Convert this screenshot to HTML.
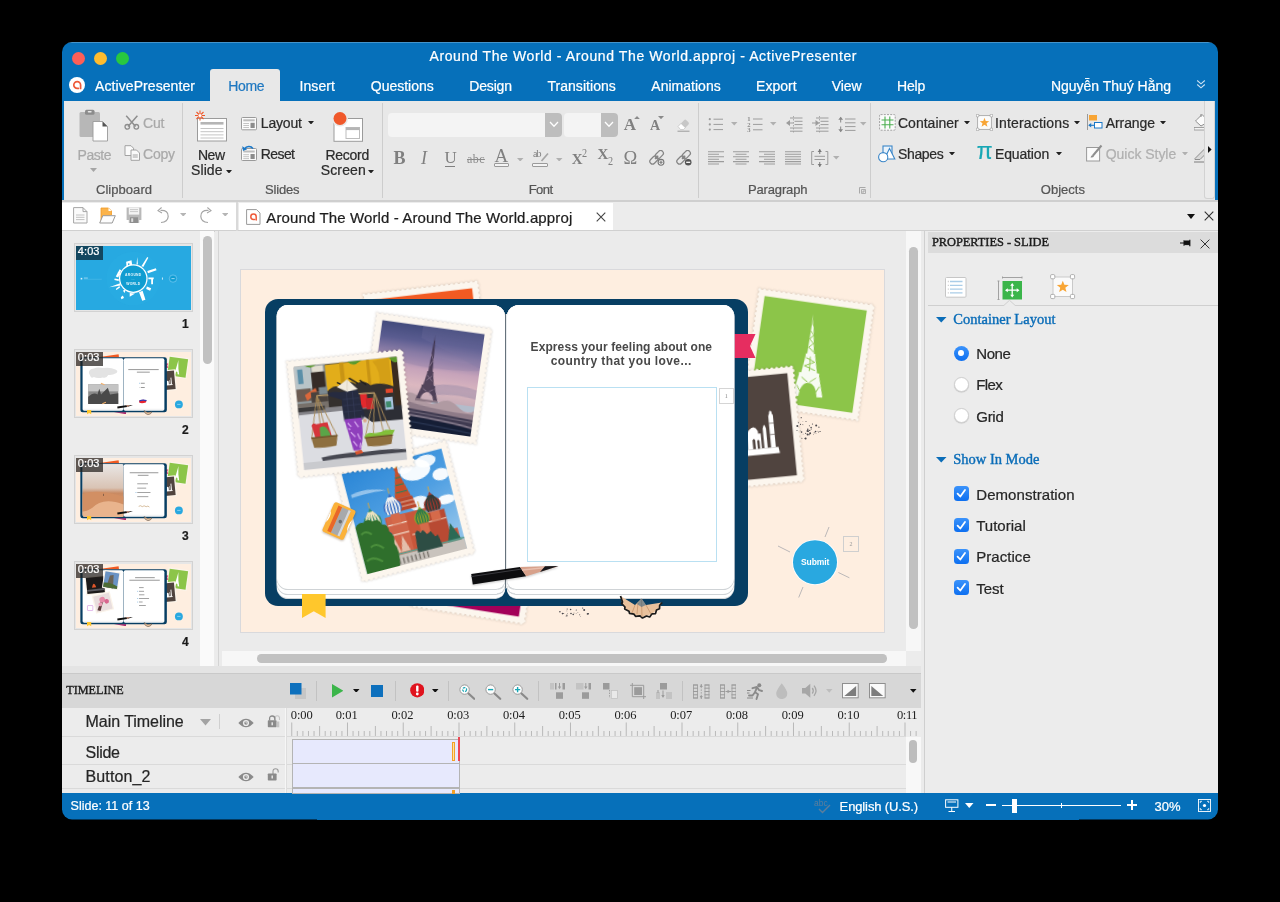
<!DOCTYPE html>
<html><head><meta charset="utf-8"><title>ActivePresenter</title>
<style>
html,body{margin:0;padding:0}
body{width:1280px;height:902px;background:#000;overflow:hidden;position:relative;font-family:"Liberation Sans",sans-serif}
#win{position:absolute;left:0;top:0;width:1280px;height:902px;clip-path:inset(42px 62px 82.5px 62px round 10px);background:#ececec;will-change:transform}
#win div,#win svg,#win span.t{position:absolute}
#win div{box-sizing:border-box}
.t{white-space:pre;line-height:1}
.f{font-family:"Liberation Sans",sans-serif;-webkit-text-stroke:.22px currentColor}
.fs{font-family:"Liberation Serif",serif}

</style></head><body>
<div id="win">
<div style="left:62px;top:42px;width:1156px;height:59px;background:#0670ba;"></div>
<div style="left:62px;top:42px;width:1156px;height:1px;background:rgba(255,255,255,0.25);"></div>
<div style="left:71.5px;top:51.5px;width:13px;height:13px;background:#fd5f57;border-radius:50%;"></div>
<div style="left:93.9px;top:51.5px;width:13px;height:13px;background:#febc2e;border-radius:50%;"></div>
<div style="left:116.2px;top:51.5px;width:13px;height:13px;background:#28c840;border-radius:50%;"></div>
<span class="t f" style="left:429.50px;top:48.75px;font-size:14px;color:#fff;letter-spacing:0.607px;">Around The World - Around The World.approj - ActivePresenter</span>
<div style="left:69px;top:77px;width:16px;height:16px;background:#fff;border-radius:50%;"></div>
<svg style="left:69px;top:77px;" width="16" height="16" viewBox="0 0 16 16"><path d="M11.6 11.4V8a3.4 3.4 0 1 0-3.4 3.4h1.2" fill="none" stroke="#ee5a3a" stroke-width="1.7" stroke-linecap="round"/></svg>
<span class="t f" style="left:95.00px;top:78.65px;font-size:14px;color:#fff;letter-spacing:0.084px;">ActivePresenter</span>
<div style="left:210px;top:69px;width:70px;height:32px;background:#e8e8e8;border-radius:3px 3px 0 0;"></div>
<span class="t f" style="left:228.25px;top:78.65px;font-size:14px;color:#1f78c1;letter-spacing:-0.370px;">Home</span>
<span class="t f" style="left:299.50px;top:78.65px;font-size:14px;color:#fff;letter-spacing:0.097px;">Insert</span>
<span class="t f" style="left:370.75px;top:78.65px;font-size:14px;color:#fff;letter-spacing:-0.006px;">Questions</span>
<span class="t f" style="left:469.25px;top:78.65px;font-size:14px;color:#fff;letter-spacing:-0.169px;">Design</span>
<span class="t f" style="left:547.40px;top:78.65px;font-size:14px;color:#fff;letter-spacing:0.045px;">Transitions</span>
<span class="t f" style="left:651.30px;top:78.65px;font-size:14px;color:#fff;letter-spacing:0.015px;">Animations</span>
<span class="t f" style="left:756.00px;top:78.65px;font-size:14px;color:#fff;letter-spacing:0.046px;">Export</span>
<span class="t f" style="left:831.70px;top:78.65px;font-size:14px;color:#fff;letter-spacing:-0.065px;">View</span>
<span class="t f" style="left:897.00px;top:78.65px;font-size:14px;color:#fff;letter-spacing:-0.199px;">Help</span>
<span class="t f" style="left:1051.00px;top:78.65px;font-size:14px;color:#fff;letter-spacing:-0.025px;">Nguyễn Thuý Hằng</span>
<svg style="left:1196px;top:79px;" width="10" height="11" viewBox="0 0 10 11"><path d="M1.2 1.5 L5 4.8 L8.8 1.5 M1.2 5.5 L5 8.8 L8.8 5.5" fill="none" stroke="#cfe3f3" stroke-width="1.1"/></svg>
<div style="left:62px;top:100.5px;width:1156px;height:100px;background:#e8e8e8;"></div>
<div style="left:62px;top:100.5px;width:2px;height:100px;background:#0670ba;"></div>
<div style="left:1215px;top:100.5px;width:3px;height:100px;background:#0670ba;"></div>
<div style="left:62px;top:200px;width:1156px;height:1.5px;background:#cfcfcf;"></div>
<div style="left:62px;top:202px;width:1156px;height:29px;background:#ececec;"></div>
<div style="left:62px;top:202.5px;width:174.5px;height:27.5px;background:#fff;"></div>
<div style="left:238.5px;top:202.5px;width:374px;height:27.5px;background:#fff;"></div>
<div style="left:62px;top:230.4px;width:1156px;height:1.2px;background:#d0d0d0;"></div>
<div style="left:236.3px;top:202px;width:2.2px;height:29px;background:#d9d9d9;"></div>
<div style="left:62px;top:793px;width:1156px;height:27.5px;background:#0670ba;"></div>
<span class="t f" style="left:70.60px;top:799.92px;font-size:12.5px;color:#fff;">Slide: 11 of 13</span>
<span class="t f" style="left:839.60px;top:799.50px;font-size:13px;color:#fff;letter-spacing:-0.123px;">English (U.S.)</span>
<span class="t f" style="left:1154.40px;top:800.00px;font-size:13px;color:#fff;letter-spacing:0.084px;">30%</span>
<div style="left:181.5px;top:103px;width:1px;height:95px;background:#cdcdcd;"></div>
<div style="left:381.5px;top:103px;width:1px;height:95px;background:#cdcdcd;"></div>
<div style="left:698.25px;top:103px;width:1px;height:95px;background:#cdcdcd;"></div>
<div style="left:870.0px;top:103px;width:1px;height:95px;background:#cdcdcd;"></div>
<svg style="left:79px;top:109px;" width="30" height="33" viewBox="0 0 30 33"><rect x="0.5" y="3" width="20.5" height="25" rx="1.5" fill="#b7b7b7"/>
<rect x="6" y="0.8" width="9.5" height="5" rx="1.5" fill="#8c8c8c"/><rect x="8.7" y="2" width="4" height="1.6" rx=".8" fill="#e8e8e8"/>
<path d="M14 12.5H23.5L28.5 17.5V32H14Z" fill="#fff" stroke="#9a9a9a" stroke-width=".9"/><path d="M23.5 12.5V17.5H28.5Z" fill="#555"/></svg>
<span class="t f" style="left:77.50px;top:147.95px;font-size:14px;color:#a9a9a9;letter-spacing:-0.453px;">Paste</span>
<svg style="left:90px;top:167.5px;" width="7" height="4" viewBox="0 0 7 4"><path d="M0 0H7L3.5 4Z" fill="#a5a5a5"/></svg>
<svg style="left:123.5px;top:114.5px;" width="16" height="15" viewBox="0 0 16 15"><path d="M2.2 0.8L11.6 11.4M13.4 0.8L4 11.4" stroke="#8e8e8e" stroke-width="1.5" fill="none"/>
<circle cx="3.3" cy="11.8" r="2.3" fill="none" stroke="#8e8e8e" stroke-width="1.3"/><circle cx="12.3" cy="11.8" r="2.3" fill="none" stroke="#8e8e8e" stroke-width="1.3"/></svg>
<span class="t f" style="left:143.00px;top:115.65px;font-size:14px;color:#a9a9a9;letter-spacing:-0.148px;">Cut</span>
<svg style="left:123.5px;top:145px;" width="17" height="16" viewBox="0 0 17 16"><path d="M1 .7H7L9.5 3.2V10.5H1Z" fill="#fafafa" stroke="#9a9a9a" stroke-width=".9"/>
<path d="M7 5H12.5L15.5 8V15.3H7Z" fill="#fafafa" stroke="#9a9a9a" stroke-width=".9"/><path d="M8.7 10H13.8M8.7 12H13.8" stroke="#9a9a9a" stroke-width=".9"/></svg>
<span class="t f" style="left:143.00px;top:146.90px;font-size:14px;color:#a9a9a9;letter-spacing:-0.229px;">Copy</span>
<span class="t f" style="left:96.00px;top:183.00px;font-size:13px;color:#555;letter-spacing:0.043px;">Clipboard</span>
<svg style="left:194px;top:108px;" width="34" height="34" viewBox="0 0 34 34"><rect x="3.5" y="10.5" width="29" height="22.5" fill="#fff" stroke="#9b9b9b" stroke-width="1"/>
<rect x="6.5" y="14" width="23" height="2.6" fill="#b5b5b5"/><path d="M6.5 20.5H29.5M6.5 23.7H29.5M6.5 26.9H29.5M6.5 30H29.5" stroke="#c4c4c4" stroke-width="1"/>
<g stroke="#f0582a" stroke-width="1.1"><path d="M6 2.5V12.5M1 7.5H11M2.5 4L9.5 11M9.5 4L2.5 11"/></g><circle cx="6" cy="7.5" r="1.6" fill="#fff"/></svg>
<span class="t f" style="left:198.00px;top:147.75px;font-size:14px;color:#2b2b2b;letter-spacing:-0.508px;">New</span>
<span class="t f" style="left:191.00px;top:163.15px;font-size:14px;color:#2b2b2b;letter-spacing:0.090px;">Slide</span>
<svg style="left:226px;top:169.5px;" width="6" height="3.5" viewBox="0 0 6 3.5"><path d="M0 0H6L3.0 3.5Z" fill="#222"/></svg>
<svg style="left:241px;top:117px;" width="16" height="13.5" viewBox="0 0 16 13.5"><rect x=".5" y=".5" width="15" height="12.3" rx="1" fill="#fbfbfb" stroke="#9a9a9a"/><rect x="2.3" y="2.3" width="11.4" height="2" fill="#bdbdbd"/>
<rect x="9.5" y="5.8" width="4.2" height="5.2" fill="#8c8c8c"/><path d="M2.3 6.5H8M2.3 8.5H8M2.3 10.5H8" stroke="#bdbdbd" stroke-width=".9"/></svg>
<span class="t f" style="left:260.75px;top:115.65px;font-size:14px;color:#2b2b2b;letter-spacing:-0.159px;">Layout</span>
<svg style="left:307.5px;top:120.5px;" width="6" height="3.5" viewBox="0 0 6 3.5"><path d="M0 0H6L3.0 3.5Z" fill="#222"/></svg>
<svg style="left:241px;top:145px;" width="16" height="16" viewBox="0 0 16 16"><rect x=".5" y="3.5" width="15" height="12" rx="1" fill="#fbfbfb" stroke="#9a9a9a"/><rect x="2.3" y="5.5" width="11.4" height="2" fill="#bdbdbd"/>
<rect x="9.5" y="9" width="4.2" height="5" fill="#8c8c8c"/><path d="M2.3 9.7H8M2.3 11.7H8M2.3 13.6H8" stroke="#bdbdbd" stroke-width=".9"/>
<path d="M3.5 4.2C5.5 .8 10 .8 12 3.6" fill="none" stroke="#1b78c8" stroke-width="1.6"/><path d="M1.2 1.2L2 6L6.2 4.2Z" fill="#1b78c8"/></svg>
<span class="t f" style="left:260.75px;top:146.90px;font-size:14px;color:#2b2b2b;letter-spacing:-0.582px;">Reset</span>
<svg style="left:331px;top:109px;" width="33" height="34" viewBox="0 0 33 34"><rect x="3" y="9.5" width="28.5" height="22.8" fill="#fff" stroke="#9b9b9b"/>
<rect x="15" y="18.5" width="13.5" height="11" fill="#fff" stroke="#bdbdbd"/><rect x="15" y="18.5" width="13.5" height="2.6" fill="#b5b5b5"/>
<circle cx="9" cy="9.5" r="8" fill="#e8e8e8"/><circle cx="9" cy="9.5" r="6.5" fill="#f0582a"/></svg>
<span class="t f" style="left:325.50px;top:147.75px;font-size:14px;color:#2b2b2b;letter-spacing:-0.278px;">Record</span>
<span class="t f" style="left:320.75px;top:163.15px;font-size:14px;color:#2b2b2b;letter-spacing:0.128px;">Screen</span>
<svg style="left:367.5px;top:169.5px;" width="6" height="3.5" viewBox="0 0 6 3.5"><path d="M0 0H6L3.0 3.5Z" fill="#222"/></svg>
<span class="t f" style="left:265.00px;top:183.00px;font-size:13px;color:#555;letter-spacing:-0.184px;">Slides</span>
<div style="left:387.5px;top:112.5px;width:174.5px;height:24px;background:#f4f4f4;border-radius:4px;"></div>
<div style="left:545px;top:112.5px;width:17px;height:24px;background:#bdbdbd;border-radius:0 4px 4px 0;"></div>
<svg style="left:548.5px;top:120.5px;" width="10" height="7" viewBox="0 0 10 7"><path d="M1 1L5 5.2L9 1" fill="none" stroke="#fff" stroke-width="1.3"/></svg>
<div style="left:563.75px;top:112.5px;width:54.25px;height:24px;background:#f4f4f4;border-radius:4px;"></div>
<div style="left:600.75px;top:112.5px;width:17.25px;height:24px;background:#bdbdbd;border-radius:0 4px 4px 0;"></div>
<svg style="left:604.3px;top:120.5px;" width="10" height="7" viewBox="0 0 10 7"><path d="M1 1L5 5.2L9 1" fill="none" stroke="#fff" stroke-width="1.3"/></svg>
<span class="t fs" style="left:623.75px;top:116.26px;font-size:17px;color:#808080;font-weight:700;">A</span>
<svg style="left:633.5px;top:116px;" width="6" height="3.2" viewBox="0 0 6 3.2"><path d="M0 3.2H6L3 0Z" fill="#8a8a8a"/></svg>
<span class="t fs" style="left:650.00px;top:118.78px;font-size:14px;color:#808080;font-weight:700;">A</span>
<svg style="left:658px;top:116px;" width="6" height="3.2" viewBox="0 0 6 3.2"><path d="M0 0H6L3 3.2Z" fill="#8a8a8a"/></svg>
<svg style="left:677px;top:117px;" width="13" height="15" viewBox="0 0 13 15"><path d="M1 9.5L7 3.2Q8.2 2 9.4 3.2L11.5 5.3Q12.5 6.5 11.3 7.7L6.5 12.5H3.5Z" fill="#c7c7c7"/>
<path d="M1 9.5L4 6.4L8.3 10.7L6.5 12.5H3.5Z" fill="#fff" stroke="#c0c0c0" stroke-width=".6"/><path d="M.5 14.2H12.5" stroke="#9a9a9a" stroke-width="1"/></svg>
<span class="t fs" style="left:393.50px;top:148.93px;font-size:18px;color:#808080;font-weight:700;">B</span>
<span class="t fs" style="left:421.00px;top:148.93px;font-size:18px;color:#808080;font-style:italic;">I</span>
<span class="t fs" style="left:444.50px;top:149.26px;font-size:17px;color:#808080;">U</span>
<div style="left:444.5px;top:166px;width:10.5px;height:1.2px;background:#808080;"></div>
<span class="t fs" style="left:467.00px;top:153.45px;font-size:12px;color:#8c8c8c;letter-spacing:0.422px;text-decoration:line-through;">abc</span>
<span class="t fs" style="left:494.50px;top:146.09px;font-size:19px;color:#808080;">A</span>
<div style="left:493.5px;top:163.3px;width:15.5px;height:3.4px;background:#f3f3f3;border:1px solid #9a9a9a;border-radius:1px;"></div>
<svg style="left:517.3px;top:157.5px;" width="6.5" height="3.5" viewBox="0 0 6.5 3.5"><path d="M0 0H6.5L3.25 3.5Z" fill="#b0b0b0"/></svg>
<span class="t fs" style="left:533.00px;top:148.62px;font-size:10px;color:#808080;letter-spacing:-0.953px;">ab</span>
<svg style="left:540px;top:152px;" width="9" height="10" viewBox="0 0 9 10"><path d="M1.5 9L8 1.5" stroke="#a5a5a5" stroke-width="1.7"/></svg>
<div style="left:532px;top:163.3px;width:16px;height:3.4px;background:#f3f3f3;border:1px solid #9a9a9a;border-radius:1px;"></div>
<svg style="left:556px;top:157.5px;" width="6.5" height="3.5" viewBox="0 0 6.5 3.5"><path d="M0 0H6.5L3.25 3.5Z" fill="#b0b0b0"/></svg>
<span class="t fs" style="left:571.80px;top:151.54px;font-size:15px;color:#808080;font-weight:700;">X</span>
<span class="t fs" style="left:582.20px;top:147.45px;font-size:12px;color:#808080;transform:scaleX(.85);transform-origin:0 0;">2</span>
<span class="t fs" style="left:597.40px;top:147.14px;font-size:15px;color:#808080;font-weight:700;">X</span>
<span class="t fs" style="left:607.80px;top:154.95px;font-size:12px;color:#808080;transform:scaleX(.85);transform-origin:0 0;">2</span>
<span class="t fs" style="left:623.50px;top:148.51px;font-size:18.5px;color:#808080;">Ω</span>
<svg style="left:649px;top:149.5px;" width="16" height="16" viewBox="0 0 16 16"><g fill="none" stroke="#858585" stroke-width="1.25"><rect x="-4.6" y="-2.7" width="9.2" height="5.4" rx="2.7" transform="translate(10.3 4.6) rotate(-45)"/><rect x="-4.6" y="-2.7" width="9.2" height="5.4" rx="2.7" transform="translate(4.9 10) rotate(-45)"/><path d="M6 9L9.2 5.8" stroke-width="1.4"/></g><circle cx="12" cy="12.3" r="2.9" fill="#f4f4f4" stroke="#777" stroke-width="1.1"/><path d="M10.3 12.3H13.7M12 10.6V14" stroke="#777" stroke-width="1.1"/></svg>
<svg style="left:676px;top:149.5px;" width="16" height="16" viewBox="0 0 16 16"><g fill="none" stroke="#858585" stroke-width="1.25"><rect x="-4.6" y="-2.7" width="9.2" height="5.4" rx="2.7" transform="translate(10.3 4.6) rotate(-45)"/><rect x="-4.6" y="-2.7" width="9.2" height="5.4" rx="2.7" transform="translate(4.9 10) rotate(-45)"/><path d="M6 9L9.2 5.8" stroke-width="1.4"/></g><circle cx="12.2" cy="12.3" r="3.3" fill="#555"/><path d="M10.2 12.3H14.2" stroke="#fff" stroke-width="1.3"/></svg>
<span class="t f" style="left:528.75px;top:183.00px;font-size:13px;color:#555;letter-spacing:-0.589px;">Font</span>
<svg style="left:708px;top:117px;" width="16" height="15" viewBox="0 0 16 15"><g fill="#9c9c9c"><circle cx="1.8" cy="2.2" r="1.1"/><circle cx="1.8" cy="7.4" r="1.1"/><circle cx="1.8" cy="12.6" r="1.1"/></g><path d="M5.5 2.2H15M5.5 7.4H15M5.5 12.6H15" stroke="#9c9c9c" stroke-width="1"/></svg>
<svg style="left:731.2px;top:122.3px;" width="6.5" height="3.5" viewBox="0 0 6.5 3.5"><path d="M0 0H6.5L3.25 3.5Z" fill="#b0b0b0"/></svg>
<svg style="left:747px;top:116px;" width="16" height="17" viewBox="0 0 16 17"><path d="M6 3H15.5M6 8.4H15.5M6 13.8H15.5" stroke="#9c9c9c" stroke-width="1"/><g fill="#8c8c8c" font-family="Liberation Serif" font-weight="700" font-size="6.6"><text x=".2" y="5.2">1</text><text x=".2" y="10.6">2</text><text x=".2" y="16">3</text></g></svg>
<svg style="left:770px;top:122.3px;" width="6.5" height="3.5" viewBox="0 0 6.5 3.5"><path d="M0 0H6.5L3.25 3.5Z" fill="#b0b0b0"/></svg>
<svg style="left:786px;top:116px;" width="17" height="17" viewBox="0 0 17 17"><path d="M4 2H16.5M8.5 5.3H16.5M8.5 8.6H16.5M4 12H16.5M4 15.2H16.5" stroke="#9c9c9c" stroke-width="1" /><path d="M0 7L4 4V10Z" fill="#9c9c9c"/><path d="M2 7H7.5" stroke="#9c9c9c"/><path d="M7.5 0V17" stroke="#9c9c9c" stroke-width=".8" stroke-dasharray="1.5 1.5"/></svg>
<svg style="left:811.5px;top:116px;" width="17" height="17" viewBox="0 0 17 17"><path d="M4 2H16.5M8.5 5.3H16.5M8.5 8.6H16.5M4 12H16.5M4 15.2H16.5" stroke="#9c9c9c" stroke-width="1" /><path d="M7.5 7L3.5 4V10Z" fill="#9c9c9c"/><path d="M0 7H5" stroke="#9c9c9c"/><path d="M7.5 0V17" stroke="#9c9c9c" stroke-width=".8" stroke-dasharray="1.5 1.5"/></svg>
<svg style="left:838px;top:116px;" width="18" height="17" viewBox="0 0 18 17"><path d="M7 3H17.5M7 6.8H17.5M7 10.6H17.5M7 14.4H17.5" stroke="#9c9c9c" stroke-width="1"/><path d="M2.7 1.5V6.5M2.7 10.5V15.5" stroke="#888" stroke-width="1"/><path d="M.3 3.8L2.7 .8L5.1 3.8ZM.3 13.2L2.7 16.2L5.1 13.2Z" fill="#888"/></svg>
<svg style="left:860px;top:122.3px;" width="6.5" height="3.5" viewBox="0 0 6.5 3.5"><path d="M0 0H6.5L3.25 3.5Z" fill="#b0b0b0"/></svg>
<svg style="left:707.5px;top:151px;" width="16.5" height="14" viewBox="0 0 16.5 14"><path d="M0 0.80H16M0 3.25H11M0 5.70H16M0 8.15H11M0 10.60H16M0 13.05H11" stroke="#9c9c9c" stroke-width="1.05"/></svg>
<svg style="left:733px;top:151px;" width="16.5" height="14" viewBox="0 0 16.5 14"><path d="M0 0.80H16M2.5 3.25H13.5M0 5.70H16M2.5 8.15H13.5M0 10.60H16M2.5 13.05H13.5" stroke="#9c9c9c" stroke-width="1.05"/></svg>
<svg style="left:758.7px;top:151px;" width="16.5" height="14" viewBox="0 0 16.5 14"><path d="M0 0.80H16M5 3.25H16M0 5.70H16M5 8.15H16M0 10.60H16M5 13.05H16" stroke="#9c9c9c" stroke-width="1.05"/></svg>
<svg style="left:784.5px;top:151px;" width="16.5" height="14" viewBox="0 0 16.5 14"><path d="M0 0.80H16M0 3.25H16M0 5.70H16M0 8.15H16M0 10.60H16M0 13.05H16" stroke="#9c9c9c" stroke-width="1.05"/></svg>
<svg style="left:811px;top:149px;" width="17.5" height="18" viewBox="0 0 17.5 18"><path d="M3 2.5H.7V15.5H3M14.5 2.5H16.8V15.5H14.5" fill="none" stroke="#9c9c9c"/><path d="M3.5 7.3H14M3.5 10.5H14" stroke="#9c9c9c"/><path d="M8.75 0V5M8.75 13V18" stroke="#777"/><path d="M6.6 3L8.75 .2L10.9 3ZM6.6 15L8.75 17.8L10.9 15Z" fill="#777"/></svg>
<svg style="left:833px;top:156.3px;" width="6.5" height="3.5" viewBox="0 0 6.5 3.5"><path d="M0 0H6.5L3.25 3.5Z" fill="#b0b0b0"/></svg>
<span class="t f" style="left:748.00px;top:183.00px;font-size:13px;color:#555;letter-spacing:-0.152px;">Paragraph</span>
<svg style="left:858.5px;top:186.5px;" width="7" height="7" viewBox="0 0 7 7"><path d="M.5 6.5V.5H6.5" fill="none" stroke="#a8a8a8"/><path d="M2.5 2.5H6.5V6.5H2.5Z" fill="none" stroke="#a8a8a8" stroke-width=".9"/><path d="M4 6V4H6" fill="none" stroke="#999" stroke-width=".8"/></svg>
<svg style="left:878.5px;top:113.5px;" width="17" height="17" viewBox="0 0 17 17"><rect x=".6" y=".6" width="15.6" height="15.6" rx="1" fill="#fbfbfb" stroke="#999" stroke-width=".9" stroke-dasharray="2 1.2"/><path d="M6 2.5V14.5M10.8 2.5V14.5M2.5 6H14.5M2.5 10.8H14.5" stroke="#4caf50" stroke-width="1.1"/></svg>
<span class="t f" style="left:898.00px;top:115.65px;font-size:14px;color:#2b2b2b;letter-spacing:0.006px;">Container</span>
<svg style="left:963.75px;top:120.5px;" width="6" height="3.5" viewBox="0 0 6 3.5"><path d="M0 0H6L3.0 3.5Z" fill="#222"/></svg>
<svg style="left:975.5px;top:113.5px;" width="17" height="17" viewBox="0 0 17 17"><rect x="1.6" y="1.6" width="13.8" height="13.8" fill="#fbfbfb" stroke="#aaa" stroke-width=".9"/><polygon points="8.50,3.70 9.73,7.00 13.26,7.15 10.50,9.35 11.44,12.75 8.50,10.80 5.56,12.75 6.50,9.35 3.74,7.15 7.27,7.00" fill="#f8a535"/><rect x="0.3" y="0.3" width="2.6" height="2.6" rx=".8" fill="#fff" stroke="#999" stroke-width=".7"/><rect x="0.3" y="14.1" width="2.6" height="2.6" rx=".8" fill="#fff" stroke="#999" stroke-width=".7"/><rect x="14.1" y="0.3" width="2.6" height="2.6" rx=".8" fill="#fff" stroke="#999" stroke-width=".7"/><rect x="14.1" y="14.1" width="2.6" height="2.6" rx=".8" fill="#fff" stroke="#999" stroke-width=".7"/></svg>
<span class="t f" style="left:995.00px;top:115.65px;font-size:14px;color:#2b2b2b;letter-spacing:0.170px;">Interactions</span>
<svg style="left:1074px;top:120.5px;" width="6" height="3.5" viewBox="0 0 6 3.5"><path d="M0 0H6L3.0 3.5Z" fill="#222"/></svg>
<svg style="left:1087px;top:114px;" width="16" height="16" viewBox="0 0 16 16"><path d="M.5 0V16" stroke="#999" stroke-width="1"/><rect x="2" y="1" width="8" height="5.5" fill="#f8a535"/><rect x="7.5" y="8.5" width="7.5" height="5.5" fill="#fff" stroke="#1b78c8" stroke-width="1"/><path d="M2 11.3H7" stroke="#1b78c8" stroke-width="1.1"/><path d="M1.2 11.3L4.2 9V13.6Z" fill="#1b78c8"/></svg>
<span class="t f" style="left:1105.75px;top:115.65px;font-size:14px;color:#2b2b2b;letter-spacing:-0.094px;">Arrange</span>
<svg style="left:1160px;top:120.5px;" width="6" height="3.5" viewBox="0 0 6 3.5"><path d="M0 0H6L3.0 3.5Z" fill="#222"/></svg>
<svg style="left:1193.5px;top:113px;" width="10" height="18" viewBox="0 0 10 18"><path d="M3 6.5L8 1.5L13 6.5V9.5L7 13L1.5 8Z" fill="#fbfbfb" stroke="#8e8e8e" stroke-width="1"/><path d="M7 1V4" stroke="#8e8e8e"/><rect x="0" y="14.5" width="12" height="2.5" fill="#f3f3f3" stroke="#8e8e8e" stroke-width=".8"/></svg>
<svg style="left:878px;top:144.5px;" width="18" height="18" viewBox="0 0 18 18"><rect x="5" y="1" width="9" height="8" fill="#eaf3fb" stroke="#3a86c8" stroke-width="1.1"/><path d="M11.5 3.5L16.8 14H6.5Z" fill="#fff" stroke="#3a86c8" stroke-width="1.1"/><circle cx="5.2" cy="12.2" r="4.6" fill="#fff" stroke="#3a86c8" stroke-width="1.1"/></svg>
<span class="t f" style="left:898.00px;top:146.90px;font-size:14px;color:#2b2b2b;letter-spacing:-0.347px;">Shapes</span>
<svg style="left:949px;top:151.7px;" width="6" height="3.5" viewBox="0 0 6 3.5"><path d="M0 0H6L3.0 3.5Z" fill="#222"/></svg>
<span class="t f" style="left:976.80px;top:139.83px;font-size:23px;color:#18a7b5;">π</span>
<span class="t f" style="left:995.00px;top:146.90px;font-size:14px;color:#2b2b2b;letter-spacing:-0.147px;">Equation</span>
<svg style="left:1055.75px;top:151.7px;" width="6" height="3.5" viewBox="0 0 6 3.5"><path d="M0 0H6L3.0 3.5Z" fill="#222"/></svg>
<svg style="left:1086px;top:144px;" width="17" height="18" viewBox="0 0 17 18"><rect x=".6" y="3.5" width="13" height="13.5" fill="#fbfbfb" stroke="#999" stroke-width="1"/><path d="M7 11.5L15.5 1.5" stroke="#8e8e8e" stroke-width="2"/><path d="M4.5 13.5Q5 10.5 7.5 11L8 12.2Q7 14 4.5 13.5Z" fill="#8e8e8e"/></svg>
<span class="t f" style="left:1105.75px;top:146.90px;font-size:14px;color:#b0b0b0;letter-spacing:-0.031px;">Quick Style</span>
<svg style="left:1181.75px;top:151.7px;" width="6" height="3.5" viewBox="0 0 6 3.5"><path d="M0 0H6L3.0 3.5Z" fill="#b0b0b0"/></svg>
<svg style="left:1193.5px;top:146px;" width="10" height="18" viewBox="0 0 10 18"><path d="M1 12.5L10 3.5L13 6.5L6 13.5H1Z" fill="#d9d9d9" stroke="#8e8e8e" stroke-width="1"/><path d="M0 16H12" stroke="#8e8e8e" stroke-width="1.2"/></svg>
<span class="t f" style="left:1040.75px;top:183.00px;font-size:13px;color:#555;letter-spacing:0.029px;">Objects</span>
<div style="left:1203.5px;top:101px;width:11.5px;height:98px;background:#ebebeb;border-left:1px solid #d2d2d2;border-right:1px solid #d2d2d2;border-bottom:1px solid #d2d2d2;border-radius:0 0 3px 3px;"></div>
<svg style="left:1207.5px;top:145.5px;" width="4" height="7" viewBox="0 0 4 7"><path d="M0 0V7L3.6 3.5Z" fill="#111"/></svg>
<div style="left:62px;top:231px;width:138px;height:435px;background:#ececec;"></div>
<div style="left:199.8px;top:231px;width:14.4px;height:435px;background:#fafafa;"></div>
<div style="left:215px;top:231px;width:2.5px;height:435px;background:#ebebeb;"></div>
<div style="left:202.9px;top:235.5px;width:9.1px;height:128.5px;background:#c1c1c1;border-radius:4.5px;"></div>
<div style="left:73.5px;top:243.3px;width:119.5px;height:68.8px;background:#e6e6e6;border:1.5px solid #d2d2d2;"></div>
<svg style="left:76px;top:245.5px;overflow:hidden;" width="115.3" height="64.9" viewBox="0 0 644 362.5"><rect width="644" height="362.5" fill="#27a9e1"/><circle cx="320" cy="182" r="150" fill="#2aadE4" opacity=".5"/>
<g fill="#fff"><circle cx="320" cy="182" r="80"/>
<path d="M238 196L214 190L216 182L240 186ZM246 232L226 246L222 240L242 224ZM232 150L252 158L248 166L230 160ZM338 104L342 62L346 104ZM366 112L398 62L404 66L376 118ZM398 140L446 124L450 136L402 152ZM404 176H434V186H404ZM420 186H430V214H420ZM396 226L420 236L414 250L392 240ZM352 258L372 250L388 300L370 306ZM300 262L330 266L300 284ZM262 250L278 240L272 262ZM250 286L262 276L268 290L254 298ZM186 230L246 208L250 220ZM222 170L244 130L252 136L236 176ZM280 88L310 80L314 108L300 110L298 96L290 98L292 114L282 116Z"/></g>
<circle cx="320" cy="182" r="73" fill="#109dd1"/>
<text x="320" y="165" text-anchor="middle" font-family="Liberation Sans" font-weight="700" font-size="19" letter-spacing="1.5" fill="#e6f5fc">AROUND</text><text x="320" y="219" text-anchor="middle" font-family="Liberation Sans" font-weight="700" font-size="19" letter-spacing="1.5" fill="#e6f5fc">WORLD</text><text x="320" y="190" text-anchor="middle" font-family="Liberation Sans" font-size="14" fill="#4fbbe3">the</text>
<rect x="26" y="178" width="9" height="9" fill="#d8f0fa"/><rect x="44" y="177" width="22" height="4" fill="#bfe6f7"/><rect x="44" y="184" width="100" height="1.5" fill="#7fcdee"/>
<circle cx="542" cy="182" r="21" fill="none" stroke="#7fcdee" stroke-width="3"/><circle cx="542" cy="182" r="15" fill="#109dd1"/><rect x="533" y="179" width="18" height="6" fill="#8fd3f0"/><rect x="480" y="176" width="6" height="12" fill="#bfe6f7"/></svg>
<div style="left:76px;top:245.5px;width:27.3px;height:14.4px;background:rgba(10,25,35,.68);"></div>
<span class="t f" style="left:77.80px;top:245.89px;font-size:11px;color:#fff;letter-spacing:0.093px;">4:03</span>
<span class="t f" style="left:182.11px;top:317.84px;font-size:12px;color:#1a1a1a;font-weight:700;">1</span>
<div style="left:73.5px;top:349.3px;width:119.5px;height:68.8px;background:#e6e6e6;border:1.5px solid #d2d2d2;"></div>
<svg style="left:76px;top:351.5px;overflow:hidden;" width="115.3" height="64.9" viewBox="0 0 644 362.5"><rect width="644" height="362.5" fill="#feeee0"/>
<path d="M122 29L238 12L240 30Z" fill="#f15a22"/>
<g transform="rotate(8.1 567.7 85.1)"><rect x="509" y="26.5" width="117" height="117" fill="#fbf4ea"/><rect x="515.8" y="33.2" width="103.7" height="103.7" fill="#8cc549"/>
<path d="M566 45L568 58L573 92L582 124H573Q571 110 566.5 110Q562 110 560 124H551L560 92L565 58Z" fill="#fff"/></g>
<g transform="rotate(-5.4 500.4 160)"><rect x="442" y="101.5" width="117" height="117" fill="#fbf4ea"/><rect x="448.9" y="108.5" width="103" height="103" fill="#50443f"/>
<path d="M529 182V146H534V182ZM522 182V160H525.5V182ZM506 182V166Q511 158 517 166V182ZM503 182H537V188H503Z" fill="#fff"/></g>
<path d="M493.5 64H515L509.5 76L515 88H493.5Z" fill="#e62d60"/>
<path d="M212 336L280 336L278 347Z" fill="#a30059"/>
<rect x="24.2" y="29.2" width="483.3" height="307.5" rx="13" fill="#073e63"/>
<rect x="36.8" y="35.5" width="227.9" height="293" rx="10" fill="#fff"/><rect x="266.1" y="35.5" width="227.6" height="293" rx="10" fill="#fff"/>
<path d="M36.8 320H264.7M266.1 320H493.7" stroke="#d5d8da" stroke-width="2"/>

<path d="M61.5 324H85V348L73.3 341L61.5 348Z" fill="#ffc72c"/>
<path d="M72 118Q70 96 100 92Q120 82 150 90Q190 82 220 98Q238 104 226 118Q200 132 180 128Q168 150 150 142Q120 150 100 140Q84 150 80 134Z" fill="#e3e3e3"/>
<rect x="68" y="180" width="168" height="110" fill="#8a8a8a"/><rect x="68" y="180" width="168" height="40" fill="#c4c4c4"/><path d="M68 250Q100 220 120 238L130 205L140 238L178 200L190 238L236 230V290H68Z" fill="#4a4a4a"/>
<path d="M140 172L160 180L158 186L138 178ZM146 286L166 278L168 284L148 292Z" fill="#f4b06a"/><rect x="292" y="96" width="170" height="5" fill="#8d8d8d"/><rect x="340" y="110" width="72" height="5" fill="#8d8d8d"/><rect x="362" y="172" width="22" height="5" fill="#8d8d8d"/><rect x="362" y="196" width="22" height="5" fill="#8d8d8d"/><rect x="354" y="172" width="4" height="5" fill="#6aa8d8"/><rect x="354" y="196" width="4" height="5" fill="#ccc"/><path d="M352 272Q372 264 394 270L390 282Q370 290 354 284Z" fill="#e8232f"/><path d="M354 270Q372 262 394 268L393 275Q372 270 354 277Z" fill="#2f3fb5"/>
<path d="M230.5 305L280 297.5L318 296.5L286 307L232 315Z" fill="#111"/><path d="M280 297.5L305 297L286 307Z" fill="#d7a18b"/>
<path d="M380 327Q384 347 402 350Q418 350 424 334L400 338Z" fill="#e9c19c" stroke="#333" stroke-width="2.5"/>
<circle cx="574.7" cy="292.7" r="22" fill="#29a8e0"/><rect x="565" y="290" width="19" height="5" fill="#8fd3f0"/></svg>
<div style="left:76px;top:351.5px;width:27.3px;height:14.4px;background:rgba(35,30,28,.72);"></div>
<span class="t f" style="left:77.80px;top:351.89px;font-size:11px;color:#fff;letter-spacing:0.093px;">0:03</span>
<span class="t f" style="left:182.11px;top:423.84px;font-size:12px;color:#1a1a1a;font-weight:700;">2</span>
<div style="left:73.5px;top:455.3px;width:119.5px;height:68.8px;background:#e6e6e6;border:1.5px solid #d2d2d2;"></div>
<svg style="left:76px;top:457.5px;overflow:hidden;" width="115.3" height="64.9" viewBox="0 0 644 362.5"><rect width="644" height="362.5" fill="#feeee0"/>
<path d="M122 29L238 12L240 30Z" fill="#f15a22"/>
<g transform="rotate(8.1 567.7 85.1)"><rect x="509" y="26.5" width="117" height="117" fill="#fbf4ea"/><rect x="515.8" y="33.2" width="103.7" height="103.7" fill="#8cc549"/>
<path d="M566 45L568 58L573 92L582 124H573Q571 110 566.5 110Q562 110 560 124H551L560 92L565 58Z" fill="#fff"/></g>
<g transform="rotate(-5.4 500.4 160)"><rect x="442" y="101.5" width="117" height="117" fill="#fbf4ea"/><rect x="448.9" y="108.5" width="103" height="103" fill="#50443f"/>
<path d="M529 182V146H534V182ZM522 182V160H525.5V182ZM506 182V166Q511 158 517 166V182ZM503 182H537V188H503Z" fill="#fff"/></g>
<path d="M493.5 64H515L509.5 76L515 88H493.5Z" fill="#e62d60"/>
<path d="M212 336L280 336L278 347Z" fill="#a30059"/>
<rect x="24.2" y="29.2" width="483.3" height="307.5" rx="13" fill="#073e63"/>
<rect x="36.8" y="35.5" width="227.9" height="293" rx="10" fill="#fff"/><rect x="266.1" y="35.5" width="227.6" height="293" rx="10" fill="#fff"/>
<path d="M36.8 320H264.7M266.1 320H493.7" stroke="#d5d8da" stroke-width="2"/>
<defs><linearGradient id="ds" x1="0" y1="0" x2="0" y2="1"><stop offset="0" stop-color="#e9e6e4"/><stop offset=".45" stop-color="#d9c3b4"/><stop offset=".55" stop-color="#c98a62"/><stop offset="1" stop-color="#e0a57a"/></linearGradient></defs>
<path d="M46.8 35.5H264.7V328.5H46.8Q36.8 328.5 36.8 318.5V45.5Q36.8 35.5 46.8 35.5Z" fill="url(#ds)"/>
<path d="M36.8 200Q120 170 264.7 215V260Q150 215 90 280Q60 300 36.8 300Z" fill="#d28f63"/><path d="M90 280Q150 215 264.7 260V328.5H46.8Q36.8 328.5 36.8 300Q60 300 90 280Z" fill="#e9b48d"/><rect x="152" y="200" width="3" height="12" fill="#4a3a34"/>
<path d="M61.5 324H85V348L73.3 341L61.5 348Z" fill="#ffc72c"/>
<rect x="300" y="80" width="160" height="5" fill="#8d8d8d"/><rect x="345" y="94" width="60" height="5" fill="#8d8d8d"/><rect x="342" y="142" width="60" height="4.5" fill="#8d8d8d"/><rect x="342" y="166" width="50" height="4.5" fill="#8d8d8d"/><rect x="342" y="190" width="74" height="4.5" fill="#8d8d8d"/><rect x="342" y="214" width="62" height="4.5" fill="#8d8d8d"/><rect x="333" y="190" width="4" height="5" fill="#6aa8d8"/><path d="M350 270Q362 262 370 272Q380 262 392 272Q402 264 410 274" stroke="#c9a57a" stroke-width="4" fill="none"/>
<path d="M230.5 305L280 297.5L318 296.5L286 307L232 315Z" fill="#111"/><path d="M280 297.5L305 297L286 307Z" fill="#d7a18b"/>
<path d="M380 327Q384 347 402 350Q418 350 424 334L400 338Z" fill="#e9c19c" stroke="#333" stroke-width="2.5"/>
<circle cx="574.7" cy="292.7" r="22" fill="#29a8e0"/><rect x="565" y="290" width="19" height="5" fill="#8fd3f0"/></svg>
<div style="left:76px;top:457.5px;width:27.3px;height:14.4px;background:rgba(35,30,28,.72);"></div>
<span class="t f" style="left:77.80px;top:457.89px;font-size:11px;color:#fff;letter-spacing:0.093px;">0:03</span>
<span class="t f" style="left:182.11px;top:529.84px;font-size:12px;color:#1a1a1a;font-weight:700;">3</span>
<div style="left:73.5px;top:561.3px;width:119.5px;height:68.8px;background:#e6e6e6;border:1.5px solid #d2d2d2;"></div>
<svg style="left:76px;top:563.5px;overflow:hidden;" width="115.3" height="64.9" viewBox="0 0 644 362.5"><rect width="644" height="362.5" fill="#feeee0"/>
<path d="M122 29L238 12L240 30Z" fill="#f15a22"/>
<g transform="rotate(8.1 567.7 85.1)"><rect x="509" y="26.5" width="117" height="117" fill="#fbf4ea"/><rect x="515.8" y="33.2" width="103.7" height="103.7" fill="#8cc549"/>
<path d="M566 45L568 58L573 92L582 124H573Q571 110 566.5 110Q562 110 560 124H551L560 92L565 58Z" fill="#fff"/></g>
<g transform="rotate(-5.4 500.4 160)"><rect x="442" y="101.5" width="117" height="117" fill="#fbf4ea"/><rect x="448.9" y="108.5" width="103" height="103" fill="#50443f"/>
<path d="M529 182V146H534V182ZM522 182V160H525.5V182ZM506 182V166Q511 158 517 166V182ZM503 182H537V188H503Z" fill="#fff"/></g>
<path d="M493.5 64H515L509.5 76L515 88H493.5Z" fill="#e62d60"/>
<path d="M212 336L280 336L278 347Z" fill="#a30059"/>
<rect x="24.2" y="29.2" width="483.3" height="307.5" rx="13" fill="#073e63"/>
<rect x="36.8" y="35.5" width="227.9" height="293" rx="10" fill="#fff"/><rect x="266.1" y="35.5" width="227.6" height="293" rx="10" fill="#fff"/>
<path d="M36.8 320H264.7M266.1 320H493.7" stroke="#d5d8da" stroke-width="2"/>

<path d="M61.5 324H85V348L73.3 341L61.5 348Z" fill="#ffc72c"/>
<g transform="rotate(-6 108 118)"><rect x="52" y="66" width="112" height="104" fill="#fbf4ea"/><rect x="59" y="73" width="98" height="90" fill="#1c1a1a"/><path d="M88 130Q100 90 112 130Z" fill="#e0562a"/><rect x="59" y="140" width="98" height="10" fill="#5a5a60"/></g>
<g transform="rotate(9 195 88)"><rect x="152" y="40" width="90" height="100" fill="#fbf4ea"/><rect x="158" y="46" width="78" height="88" fill="#6a93c4"/><path d="M176 134L186 66L206 60L214 134Z" fill="#6b6458"/><path d="M158 110Q190 100 236 120V134H158Z" fill="#4d6b34"/></g>
<g transform="rotate(-14 148 214)"><rect x="98" y="164" width="104" height="104" fill="#fbf4ea"/><rect x="105" y="171" width="90" height="90" fill="#e9dede"/><path d="M110 250L150 190L160 196L126 258Z" fill="#5a3a3a"/><circle cx="150" cy="200" r="16" fill="#e48aa8"/><circle cx="172" cy="214" r="13" fill="#d8668e"/><circle cx="134" cy="222" r="11" fill="#eaa0b8"/></g>
<rect x="64" y="232" width="30" height="28" rx="3" fill="#fff" stroke="#c06ad0" stroke-width="2.5"/><rect x="330" y="74" width="110" height="5" fill="#8d8d8d"/><rect x="298" y="88" width="170" height="5" fill="#8d8d8d"/><rect x="352" y="130" width="26" height="4.5" fill="#8d8d8d"/><rect x="352" y="150" width="28" height="4.5" fill="#8d8d8d"/><rect x="352" y="170" width="30" height="4.5" fill="#8d8d8d"/><rect x="352" y="190" width="56" height="4.5" fill="#8d8d8d"/><rect x="352" y="210" width="20" height="4.5" fill="#8d8d8d"/><rect x="352" y="230" width="38" height="4.5" fill="#8d8d8d"/><rect x="343" y="150" width="4" height="5" fill="#6aa8d8"/><rect x="343" y="190" width="4" height="5" fill="#6aa8d8"/><rect x="343" y="210" width="4" height="5" fill="#6aa8d8"/>
<path d="M230.5 305L280 297.5L318 296.5L286 307L232 315Z" fill="#111"/><path d="M280 297.5L305 297L286 307Z" fill="#d7a18b"/>
<path d="M380 327Q384 347 402 350Q418 350 424 334L400 338Z" fill="#e9c19c" stroke="#333" stroke-width="2.5"/>
<circle cx="574.7" cy="292.7" r="22" fill="#29a8e0"/><rect x="565" y="290" width="19" height="5" fill="#8fd3f0"/></svg>
<div style="left:76px;top:563.5px;width:27.3px;height:14.4px;background:rgba(35,30,28,.72);"></div>
<span class="t f" style="left:77.80px;top:563.89px;font-size:11px;color:#fff;letter-spacing:0.093px;">0:03</span>
<span class="t f" style="left:182.11px;top:635.84px;font-size:12px;color:#1a1a1a;font-weight:700;">4</span>
<div style="left:217.5px;top:231px;width:1px;height:435px;background:#d4d4d4;"></div>
<div style="left:218.5px;top:231px;width:687px;height:420px;background:#ebebeb;"></div>
<div style="left:240px;top:269px;width:645px;height:363.5px;background:#feeee0;border:1px solid #d9d9dc;"></div>
<svg style="left:366.2px;top:283.5px;transform:rotate(-6.6deg);filter:drop-shadow(.4px .8px 1.1px rgba(60,40,20,.28));" width="122.20" height="122.20" viewBox="0 0 122.20 122.20"><g transform="translate(4 4)"><rect width="114.20" height="114.20" fill="#fcf6ee"/><rect width="114.20" height="114.20" fill="none" stroke="#fcf6ee" stroke-width="3.2" stroke-linecap="round" stroke-dasharray="0.01 4.902"/><g transform="translate(5.6 5.6) scale(1.0300)"><svg width="100" height="100" viewBox="0 0 100 100" overflow="hidden"><rect width="100" height="100" fill="#f15a22"/></svg></g></g></svg>
<svg style="left:415.4px;top:497.04999999999995px;transform:rotate(8.9deg);filter:drop-shadow(.4px .8px 1.1px rgba(60,40,20,.28));" width="122.20" height="122.20" viewBox="0 0 122.20 122.20"><g transform="translate(4 4)"><rect width="114.20" height="114.20" fill="#fcf6ee"/><rect width="114.20" height="114.20" fill="none" stroke="#fcf6ee" stroke-width="3.2" stroke-linecap="round" stroke-dasharray="0.01 4.902"/><g transform="translate(5.6 5.6) scale(1.0300)"><svg width="100" height="100" viewBox="0 0 100 100" overflow="hidden"><rect width="100" height="100" fill="#a30059"/></svg></g></g></svg>
<svg style="left:746.75px;top:293.15000000000003px;transform:rotate(8.1deg);filter:drop-shadow(.4px .8px 1.1px rgba(60,40,20,.28));" width="122.90" height="122.90" viewBox="0 0 122.90 122.90"><g transform="translate(4 4)"><rect width="114.90" height="114.90" fill="#fcf6ee"/><rect width="114.90" height="114.90" fill="none" stroke="#fcf6ee" stroke-width="3.2" stroke-linecap="round" stroke-dasharray="0.01 4.879"/><g transform="translate(5.6 5.6) scale(1.0370)"><svg width="100" height="100" viewBox="0 0 100 100" overflow="hidden"><rect width="100" height="100" fill="#8cc549"/>
<g transform="rotate(-3.8 52 50)"><path d="M51.6 11L52.2 21L53 23L55.2 49H56.6V51.2L59.6 67.5H61.8V70L66.5 90.5H60.8Q59.5 77.5 52 77Q44.5 77.5 43.2 90.5H37.5L42.2 70V67.5H44.4L47.4 51.2V49H48.8L51 23L51.3 21Z" fill="#fff" opacity=".93"/>
<path d="M50.6 27L53.6 31L50.2 35L54 39L49.8 43L54.6 47M48 53L56.5 57L47 61L57.5 65M45 72L51 76.5M59 72L53 76.5M41 80L44.5 86M63 80L59.5 86M52 52V66" stroke="#8cc549" stroke-width=".9" fill="none"/></g></svg></g></g></svg>
<svg style="left:679.8px;top:368.4px;transform:rotate(-5.4deg);filter:drop-shadow(.4px .8px 1.1px rgba(60,40,20,.28));" width="122.20" height="122.20" viewBox="0 0 122.20 122.20"><g transform="translate(4 4)"><rect width="114.20" height="114.20" fill="#fcf6ee"/><rect width="114.20" height="114.20" fill="none" stroke="#fcf6ee" stroke-width="3.2" stroke-linecap="round" stroke-dasharray="0.01 4.902"/><g transform="translate(5.6 5.6) scale(1.0300)"><svg width="100" height="100" viewBox="0 0 100 100" overflow="hidden"><rect width="100" height="100" fill="#50443f"/>
<g fill="#fff"><path d="M77.4 70.6V40.5Q77.4 38.5 78.3 38Q78.1 35.5 79.7 34.5Q81.3 35.5 81.1 38Q82 38.5 82 40.5V70.6Z"/>
<path d="M70.9 70.6V52Q70.9 50.5 71.5 50.2Q71.4 48.6 72.5 48Q73.6 48.6 73.5 50.2Q74.1 50.5 74.1 52V70.6Z"/>
<path d="M55 70.6V55Q58 50 62 49.5Q64.5 50 66 53.5V56H68.5V70.6Z"/>
<path d="M52 70.6H84.5L85.5 76.5H52Z"/></g>
<path d="M60 70.6V62Q61.3 59.5 62.6 62V70.6ZM64.5 70.6V63Q65.6 61 66.7 63V70.6Z" fill="#50443f"/><path d="M77.4 47H82M77.4 58H82" stroke="#50443f" stroke-width=".6"/></svg></g></g></svg>
<svg style="left:792px;top:412px;" width="36" height="34" viewBox="0 0 36 34"><g fill="#2b2b33" opacity=".85"><circle cx="15.5" cy="19.1" r="1.0"/><circle cx="27.8" cy="19.4" r="0.35"/><circle cx="15.8" cy="17.3" r="0.8"/><circle cx="17.5" cy="18.3" r="0.6"/><circle cx="19.2" cy="17.0" r="0.6"/><circle cx="25.1" cy="19.2" r="0.4"/><circle cx="10.9" cy="9.5" r="0.35"/><circle cx="11.0" cy="12.8" r="0.4"/><circle cx="28.2" cy="19.4" r="0.5"/><circle cx="9.6" cy="20.1" r="0.8"/><circle cx="12.9" cy="26.5" r="0.4"/><circle cx="24.0" cy="21.3" r="0.4"/><circle cx="11.1" cy="22.1" r="0.35"/><circle cx="8.5" cy="12.3" r="0.6"/><circle cx="14.0" cy="9.5" r="0.5"/><circle cx="5.0" cy="18.6" r="0.5"/><circle cx="13.6" cy="26.5" r="1.0"/><circle cx="17.4" cy="13.8" r="0.5"/><circle cx="5.3" cy="14.1" r="1.0"/><circle cx="8.3" cy="18.9" r="0.35"/><circle cx="22.2" cy="20.8" r="0.5"/><circle cx="21.6" cy="22.4" r="0.35"/><circle cx="19.1" cy="15.5" r="0.8"/><circle cx="6.4" cy="10.8" r="0.5"/><circle cx="13.7" cy="21.3" r="0.6"/><circle cx="10.4" cy="12.4" r="0.35"/><circle cx="24.2" cy="13.4" r="1.0"/><circle cx="26.6" cy="20.1" r="0.5"/><circle cx="9.2" cy="5.7" r="0.6"/><circle cx="15.6" cy="22.5" r="1.0"/><circle cx="9.9" cy="26.2" r="0.5"/><circle cx="18.4" cy="18.5" r="0.35"/><circle cx="18.1" cy="21.3" r="1.0"/><circle cx="17.1" cy="22.7" r="0.6"/><circle cx="23.5" cy="19.6" r="0.8"/><circle cx="16.4" cy="19.2" r="0.6"/><circle cx="20.5" cy="12.0" r="0.6"/><circle cx="26.9" cy="15.2" r="0.6"/></g></svg>
<svg style="left:556px;top:604px;" width="38" height="20" viewBox="0 0 38 20"><g fill="#2b2b33" opacity=".85"><circle cx="21.9" cy="8.6" r="0.4"/><circle cx="24.5" cy="12.6" r="0.35"/><circle cx="7.7" cy="9.4" r="0.5"/><circle cx="17.2" cy="10.5" r="0.8"/><circle cx="11.1" cy="12.0" r="0.4"/><circle cx="14.6" cy="5.5" r="0.8"/><circle cx="11.2" cy="5.0" r="0.6"/><circle cx="28.2" cy="6.0" r="1.0"/><circle cx="20.3" cy="6.0" r="0.6"/><circle cx="10.9" cy="11.2" r="0.6"/><circle cx="20.1" cy="9.3" r="0.4"/><circle cx="15.0" cy="9.5" r="0.8"/><circle cx="18.0" cy="9.0" r="0.4"/><circle cx="3.9" cy="7.7" r="0.8"/><circle cx="31.5" cy="9.9" r="0.8"/><circle cx="10.2" cy="12.1" r="0.5"/><circle cx="10.9" cy="6.9" r="0.35"/><circle cx="26.7" cy="4.1" r="0.6"/><circle cx="11.4" cy="9.3" r="0.4"/><circle cx="23.7" cy="10.7" r="0.5"/><circle cx="6.5" cy="9.6" r="0.8"/><circle cx="32.3" cy="9.8" r="0.8"/></g></svg>
<div style="left:264.7px;top:298.7px;width:483.3px;height:307.5px;background:#073e63;border-radius:13px;"></div>
<svg style="left:734px;top:333.5px;" width="22" height="24.5" viewBox="0 0 22 24.5"><path d="M0 0H21.5L16 12L21.5 24H0Z" fill="#e62d60"/></svg>
<div style="left:277.3px;top:305px;width:227.9px;height:293px;background:#fff;border-radius:11px 12px 9px 11px;box-shadow:0 .6px 0 .4px #cfd3d6;"></div>
<div style="left:277.3px;top:305px;width:227.9px;height:288.70000000000005px;background:#fff;border-radius:11px 12px 9px 11px;box-shadow:0 .6px 0 .4px #cfd3d6;"></div>
<div style="left:277.3px;top:305px;width:227.9px;height:284.20000000000005px;background:#fff;border-radius:11px 12px 9px 11px;box-shadow:0 .6px 0 .4px #cfd3d6;"></div>
<div style="left:506.6px;top:305px;width:227.2px;height:293px;background:#fff;border-radius:12px 11px 11px 9px;box-shadow:0 .6px 0 .4px #cfd3d6;"></div>
<div style="left:506.6px;top:305px;width:227.2px;height:288.70000000000005px;background:#fff;border-radius:12px 11px 11px 9px;box-shadow:0 .6px 0 .4px #cfd3d6;"></div>
<div style="left:506.6px;top:305px;width:227.2px;height:284.20000000000005px;background:#fff;border-radius:12px 11px 11px 9px;box-shadow:0 .6px 0 .4px #cfd3d6;"></div>
<svg style="left:495.5px;top:586px;" width="20" height="12.5" viewBox="0 0 20 12.5"><path d="M0 12.5Q9.6 12 9.7 0H10.3Q10.4 12 20 12.5Z" fill="#073e63"/><path d="M2 3.2Q8.5 3.2 9.6 -4M18 3.2Q11.5 3.2 10.4 -4M1 7.7Q9 7.5 9.8 -1M19 7.7Q11 7.5 10.2 -1" stroke="#cfd3d6" stroke-width=".7" fill="none"/></svg>
<div style="left:505px;top:314px;width:1px;height:274px;background:#66727c;"></div>
<div style="left:506px;top:314px;width:1.2px;height:274px;background:#e9ecee;"></div>
<svg style="left:302px;top:593.7px;" width="23.6" height="24" viewBox="0 0 23.6 24"><path d="M0 0H23.6V24L11.8 17.3L0 24Z" fill="#ffc72c"/></svg>
<svg style="left:364.65px;top:317.04999999999995px;transform:rotate(7.9deg);filter:drop-shadow(.4px .8px 1.1px rgba(60,40,20,.28));" width="122.70" height="122.70" viewBox="0 0 122.70 122.70"><g transform="translate(4 4)"><rect width="114.70" height="114.70" fill="#fcf6ee"/><rect width="114.70" height="114.70" fill="none" stroke="#fcf6ee" stroke-width="3.2" stroke-linecap="round" stroke-dasharray="0.01 4.871"/><g transform="translate(5.6 5.6) scale(1.0350)"><svg width="100" height="100" viewBox="0 0 100 100" overflow="hidden"><defs><linearGradient id="g1" x1="0" y1="0" x2="0" y2="1"><stop offset="0" stop-color="#434b7c"/><stop offset=".15" stop-color="#5a5c90"/><stop offset=".3" stop-color="#9382aa"/><stop offset=".42" stop-color="#c6a3ba"/><stop offset=".58" stop-color="#dcb8c0"/><stop offset=".7" stop-color="#c8adb8"/></linearGradient></defs>
<rect width="100" height="100" fill="url(#g1)"/>
<path d="M40 0H100V34Q75 24 40 12Z" fill="#7a78a6" opacity=".22"/>
<path d="M0 30Q30 24 60 29T100 26V36Q60 42 30 38T0 44Z" fill="#8a7aa6" opacity=".3"/>
<path d="M55 56Q80 50 100 55V64Q80 60 55 66Z" fill="#9f8eaa" opacity=".55"/>
<path d="M58 71H100V77H58Z" fill="#b3bccb"/>
<path d="M0 70Q6 65 14 68T30 67T48 70T66 71T84 73T100 75V84H0Z" fill="#b09aa2"/>
<path d="M0 74Q20 71 40 75T100 79V84H0Z" fill="#8e7b88"/>
<path d="M0 79L100 84V93H0Z" fill="#3f3a50"/><path d="M0 81.5L100 86.5" stroke="#6d6577" stroke-width="1"/><path d="M0 86Q30 86 60 88T100 92" stroke="#807788" stroke-width="1.6" fill="none"/>
<path d="M0 88Q50 87 100 93V100H0Z" fill="#151e35"/><path d="M0 93Q40 92 100 97" stroke="#27334f" stroke-width="1.4" fill="none"/>
<g fill="#3d3149" opacity=".86"><path d="M52.6 7L52.9 12L53.6 13.5L53.9 19L55.1 43H56V45L58.2 56.5H59.6V58.8L63.5 70.5H59.4Q58.2 63.5 53 63Q47.8 63.5 46.6 70.5H42.5L46.4 58.8V56.5H47.8L50 45V43H50.9L52.1 19L52.4 13.5Z"/></g>
<path d="M42 70.5H64V72.3H42Z" fill="#7a6774" opacity=".8"/>
<path d="M50.6 47L56 52M55.4 47L50 52M51.6 26L54.4 32L51.4 38M48 60L52 62.6M58 60L54 62.6" stroke="#a58fa8" stroke-width=".6" fill="none"/></svg></g></g></svg>
<svg style="left:342.5px;top:450.0px;transform:rotate(-14.4deg);filter:drop-shadow(.4px .8px 1.1px rgba(60,40,20,.28));" width="122.50" height="122.50" viewBox="0 0 122.50 122.50"><g transform="translate(4 4)"><rect width="114.50" height="114.50" fill="#fcf6ee"/><rect width="114.50" height="114.50" fill="none" stroke="#fcf6ee" stroke-width="3.2" stroke-linecap="round" stroke-dasharray="0.01 4.915"/><g transform="translate(5.6 5.6) scale(1.0330)"><svg width="100" height="100" viewBox="0 0 100 100" overflow="hidden"><defs><linearGradient id="g2" x1="0" y1="0" x2=".4" y2="1"><stop offset="0" stop-color="#2a86d6"/><stop offset=".55" stop-color="#4f9fe2"/><stop offset="1" stop-color="#8cc1ea"/></linearGradient></defs>
<rect width="100" height="100" fill="url(#g2)"/>
<g fill="#fff"><ellipse cx="70" cy="14" rx="15" ry="10" opacity=".95"/><ellipse cx="82" cy="8" rx="10" ry="6" opacity=".9"/><ellipse cx="60" cy="10" rx="8" ry="5" opacity=".8"/><ellipse cx="93" cy="24" rx="8" ry="6" opacity=".95"/><ellipse cx="92" cy="49" rx="9" ry="4.5" opacity=".95"/><ellipse cx="66" cy="46" rx="10" ry="7" opacity=".9"/><ellipse cx="30" cy="68" rx="8" ry="5" opacity=".85"/><path d="M4 22Q20 18 38 26Q22 24 4 25Z" opacity=".45"/></g>
<path d="M52 5Q54.5 8 53.3 11L60 37H44L50.7 11Q49.5 8 52 5Z" fill="#c7502c"/><path d="M49.5 17H54.5M48 24H56M46.5 31H57.5" stroke="#3d7a55" stroke-width="1.2"/><circle cx="52" cy="5.5" r="2.2" fill="#d79a2e"/>
<path d="M43 37H61L63 49H41Z" fill="#b9472c"/><path d="M42 41H62M41.5 45H62.5" stroke="#e7cdb8" stroke-width=".8"/>
<path d="M30 52H70V93H30ZM70 58H87V93H70ZM87 78H96V93H87Z" fill="#c8563a"/>
<path d="M70 57H88V92H70Z" fill="#b84a33"/><path d="M31 52H50V92H31Z" fill="#d0654a"/>
<path d="M31 60H50M31 70H50M70 66H88M52 74H68" stroke="#efd9c8" stroke-width="1.1"/>
<path d="M34 72L38 88H30ZM42 72L47 88H38Z" fill="#e9d5c3" opacity=".8"/>
<g><path d="M40 29.825Q42.125 34.925 47.65 39.175Q50.625 45.125 46.375 49.8H33.625Q29.375 45.125 32.35 39.175Q37.875 34.925 40 29.825Z" fill="#3b6fc2"/><path d="M38.3 33.6Q31.2 42.1 34.6 49.8" stroke="#f2f2f2" stroke-width="1.7" fill="none"/><path d="M39.1 33.6Q35.6 42.1 37.3 49.8" stroke="#f2f2f2" stroke-width="1.7" fill="none"/><path d="M40.0 33.6Q40.0 42.1 40.0 49.8" stroke="#f2f2f2" stroke-width="1.7" fill="none"/><path d="M40.9 33.6Q44.4 42.1 42.7 49.8" stroke="#f2f2f2" stroke-width="1.7" fill="none"/><path d="M41.7 33.6Q48.8 42.1 45.4 49.8" stroke="#f2f2f2" stroke-width="1.7" fill="none"/><path d="M40 29.825V24.299999999999997" stroke="#d9a63a" stroke-width=".9"/></g>
<g><path d="M78 37.6Q80.0 42.4 85.2 46.4Q88.0 52.0 84.0 56.4H72.0Q68.0 52.0 70.8 46.4Q76.0 42.4 78 37.6Z" fill="#9c372d"/><path d="M76.4 41.2Q69.7 49.2 72.9 56.4" stroke="#2f3e3a" stroke-width="1.6" fill="none"/><path d="M77.2 41.2Q73.8 49.2 75.4 56.4" stroke="#2f3e3a" stroke-width="1.6" fill="none"/><path d="M78.0 41.2Q78.0 49.2 78.0 56.4" stroke="#2f3e3a" stroke-width="1.6" fill="none"/><path d="M78.8 41.2Q82.2 49.2 80.6 56.4" stroke="#2f3e3a" stroke-width="1.6" fill="none"/><path d="M79.6 41.2Q86.3 49.2 83.1 56.4" stroke="#2f3e3a" stroke-width="1.6" fill="none"/><path d="M78 37.6V32.4" stroke="#d9a63a" stroke-width=".9"/></g>
<g><path d="M65 48.84Q66.8 53.16 71.48 56.76Q74.0 61.8 70.4 65.76H59.6Q56.0 61.8 58.519999999999996 56.76Q63.2 53.16 65 48.84Z" fill="#93a12a"/><path d="M63.6 52.1Q57.5 59.3 60.4 65.8" stroke="#2d7a4c" stroke-width="1.4" fill="none"/><path d="M64.3 52.1Q61.3 59.3 62.7 65.8" stroke="#2d7a4c" stroke-width="1.4" fill="none"/><path d="M65.0 52.1Q65.0 59.3 65.0 65.8" stroke="#2d7a4c" stroke-width="1.4" fill="none"/><path d="M65.7 52.1Q68.7 59.3 67.3 65.8" stroke="#2d7a4c" stroke-width="1.4" fill="none"/><path d="M66.4 52.1Q72.5 59.3 69.6 65.8" stroke="#2d7a4c" stroke-width="1.4" fill="none"/><path d="M65 48.84V44.16" stroke="#d9a63a" stroke-width=".9"/></g>
<g><path d="M18 38.825Q20.125 43.925 25.65 48.175Q28.625 54.125 24.375 58.8H11.625Q7.375 54.125 10.35 48.175Q15.875 43.925 18 38.825Z" fill="#2f8b6b"/><path d="M16.3 42.6Q9.2 51.1 12.6 58.8" stroke="#efe3c0" stroke-width="1.7" fill="none"/><path d="M17.1 42.6Q13.6 51.1 15.3 58.8" stroke="#efe3c0" stroke-width="1.7" fill="none"/><path d="M18.0 42.6Q18.0 51.1 18.0 58.8" stroke="#efe3c0" stroke-width="1.7" fill="none"/><path d="M18.9 42.6Q22.4 51.1 20.7 58.8" stroke="#efe3c0" stroke-width="1.7" fill="none"/><path d="M19.7 42.6Q26.8 51.1 23.4 58.8" stroke="#efe3c0" stroke-width="1.7" fill="none"/><path d="M18 38.825V33.3" stroke="#d9a63a" stroke-width=".9"/></g>
<g><path d="M28 61.475Q29.375 64.775 32.95 67.525Q34.875 71.375 32.125 74.4H23.875Q21.125 71.375 23.05 67.525Q26.625 64.775 28 61.475Z" fill="#355a86"/><path d="M26.9 64.0Q22.3 69.5 24.5 74.4" stroke="#23364d" stroke-width="1.1" fill="none"/><path d="M27.6 64.0Q26.1 69.5 26.8 74.4" stroke="#23364d" stroke-width="1.1" fill="none"/><path d="M28.4 64.0Q29.9 69.5 29.2 74.4" stroke="#23364d" stroke-width="1.1" fill="none"/><path d="M29.1 64.0Q33.7 69.5 31.5 74.4" stroke="#23364d" stroke-width="1.1" fill="none"/><path d="M28 61.475V57.9" stroke="#d9a63a" stroke-width=".9"/></g>
<path d="M12 59H25V80H12Z" fill="#c8563a"/>
<path d="M36 50H45V60H36ZM74 57H83V66H74ZM61 66H69.5V76H61Z" fill="#d56a4a"/>
<path d="M82 94L90 72L99 94Z" fill="#2c6a55"/>
<path d="M30 90H100V100H30Z" fill="#c9c3bd"/><path d="M34 93V99M38 93V99M42 93V99M46 93V99M50 93V99M54 93V99M58 93V99M62 93V99" stroke="#7d7770" stroke-width="1.4"/><path d="M30 89H100" stroke="#5a9a8a" stroke-width="1.6"/>
<path d="M55 73Q58 69 60 74L63 72L66 77L70 75L73 81L76 80L78 92H53Z" fill="#2d4d44"/>
<path d="M0 54Q4 49 9 51Q13 47 18 52Q24 50 26 57Q32 58 31 66Q36 70 33 78Q37 84 33 100H0Z" fill="#2f6f2c"/><path d="M4 62Q9 58 14 64M10 76Q16 72 22 80M3 88Q10 84 18 92" stroke="#4b8f3c" stroke-width="2" fill="none"/></svg></g></g></svg>
<svg style="left:288.65000000000003px;top:351.65000000000003px;transform:rotate(-5.8deg);filter:drop-shadow(.4px .8px 1.1px rgba(60,40,20,.28));" width="122.90" height="122.90" viewBox="0 0 122.90 122.90"><g transform="translate(4 4)"><rect width="114.90" height="114.90" fill="#fcf6ee"/><rect width="114.90" height="114.90" fill="none" stroke="#fcf6ee" stroke-width="3.2" stroke-linecap="round" stroke-dasharray="0.01 4.879"/><g transform="translate(5.6 5.6) scale(1.0370)"><svg width="100" height="100" viewBox="0 0 100 100" overflow="hidden"><rect width="100" height="100" fill="#dadbe0"/>
<rect width="100" height="50" fill="#514a45"/>
<rect x="0" y="0" width="30" height="40" fill="#8f979a"/><rect x="0" y="0" width="16" height="22" fill="#b9c4c8"/><rect x="3" y="3" width="5" height="14" fill="#5b8fa8"/><rect x="17" y="1" width="11" height="6" fill="#e3ddd0"/><rect x="16" y="7" width="13" height="19" fill="#352b27"/>
<path d="M0 22H14V34H0Z" fill="#6b5a50"/><path d="M8 28L19 22L20 26L10 34Z" fill="#db673a"/>
<path d="M30 1L94 0V30H30Z" fill="#e2ad1a"/><path d="M44 0H48V28H44ZM70 0H73V29H70Z" fill="#c89414"/><path d="M76 2Q84 12 80 28H92V0Z" fill="#d49f16"/>
<path d="M94 0H100V50H94Z" fill="#3b2c20"/><path d="M52 0Q57 6 62 2L66 0ZM92 0Q96 7 100 5V0ZM10 0Q16 4 22 0Z" fill="#5c9a2e"/>
<path d="M30 27Q36 20 44 24Q50 16 58 22Q66 18 72 25Q80 22 94 28V48H30Z" fill="#34302e"/>
<path d="M40 19L47 23M52 16L60 22M62 19L68 24" stroke="#1f1d1c" stroke-width="1.4"/>
<rect x="14" y="26" width="16" height="16" fill="#4a423e"/><rect x="22" y="22" width="8" height="7" fill="#7c8991"/>
<rect x="0" y="36" width="30" height="8" fill="#77706a"/>
<path d="M0 42H68V49H0Z" fill="#86858a"/><path d="M0 40H26V44H0Z" fill="#3b3a3b"/>
<path d="M56 47H100V61H70L60 52Z" fill="#2c2e35"/>
<rect x="61" y="32" width="6.5" height="14" rx="1" fill="#e2292d"/><rect x="66" y="37" width="7" height="11" rx="1" fill="#c9262a"/>
<path d="M84 38H92V50H84Z" fill="#a9c3dd"/><path d="M85 42H90V48H85Z" fill="#3f8a6a"/><rect x="86" y="30" width="7" height="4" fill="#e2482c"/>
<path d="M0 47L56 46.5L60 52L70 60.5L100 61V100H0Z" fill="#dcdde2"/><path d="M0 93H100V100H0Z" fill="#c9cace"/>
<path d="M18 89.5Q45 86.5 60 88.5Q80 87 100 89.5V92.5Q70 92 52 92.5Q35 92 19 93Z" fill="#474851"/>
<path d="M19.4 29.7L75.1 32.7" stroke="#b99c6c" stroke-width="1.3"/>
<path d="M19.4 29.7L10.5 70M19.4 29.7L35 70M19.4 29.7L20 62M19.4 29.7L24 60M75.1 32.7L62 74M75.1 32.7L88 75M75.1 32.7L70 72M75.1 32.7L80 72" stroke="#ab8c58" stroke-width=".9" fill="none"/>
<path d="M11.5 58Q13 55 16 57L27 56L30 70H14Z" fill="#d5353a"/><path d="M19 61Q26 56 29 70H19Z" fill="#5aa548"/>
<path d="M10 69.5H35.5L33.5 79.5Q22 81 12 79.5Z" fill="#8e6f3f"/><path d="M10 70H35.5" stroke="#6a5029" stroke-width="1.1"/>
<path d="M61 74Q64 69 70 71Q76 72 82 69L91 70L88 75H61Z" fill="#82bf3a"/>
<path d="M61.5 74.5H88.5L86.5 83Q75 85 63.5 83Z" fill="#8e6f3f"/><path d="M61.5 75H88.5" stroke="#6a5029" stroke-width="1.1"/>
<path d="M30.5 28Q36 27 41.5 28.5L59 28Q62 40 60.8 57H43.5Q42.5 45 43 36Q36 33 30.5 31Z" fill="#262b40"/>
<path d="M58.5 31L63.5 52L62 57L58 45Z" fill="#262b40"/><circle cx="63.2" cy="58.2" r="1.8" fill="#d9a687"/>
<path d="M44 36H60M44 42H61M44 48H61M48 29V56M54 29V56" stroke="#3a4160" stroke-width=".5"/>
<path d="M43.5 55H60Q61.5 70 56.5 86H49.5Q46.5 70 43.5 55Z" fill="#8f3fbc"/><path d="M46.5 59L49.5 63M53 58L56.5 64M48.5 68L52.5 73M55 70L57 76M50 77L53.5 82M47 64L48 66M57 79L56 84" stroke="#d0a0ea" stroke-width="1.3"/>
<path d="M50.5 87L57 86L58.5 89L51.5 90.3Z" fill="#d8552f"/>
<path d="M50 17L59.3 27.3L49 28.8L39.5 23.5Z" fill="#f0eadd"/><path d="M50 17L49 28.8" stroke="#d6ccb8" stroke-width=".7"/></svg></g></g></svg>
<svg style="left:320.5px;top:501px;filter:drop-shadow(.5px 1px 1.2px rgba(80,40,0,.35));" width="36" height="40" viewBox="0 0 32 36"><g transform="rotate(24 16 18)"><rect x="5.5" y="3.5" width="21" height="29" rx="2.2" fill="#fbb23a"/><path d="M5.5 12Q8.3 18 5.5 24ZM26.5 12Q23.7 18 26.5 24Z" fill="#fff"/>
<rect x="13.5" y="5.5" width="8.5" height="25" fill="#a7a9ac"/><rect x="10" y="5.5" width="3.5" height="25" fill="#e8672a"/><rect x="20" y="5.5" width="2" height="25" fill="#d7d8da"/><circle cx="17.3" cy="18" r="1.6" fill="#6d6e70"/></g></svg>
<svg style="left:470px;top:564px;filter:drop-shadow(.3px 1.2px 1px rgba(0,0,0,.22));" width="90" height="22" viewBox="0 0 90 22"><path d="M1.2 10L50 2.9L56.2 12.3L2.8 20.4Z" fill="#0d0d0f"/><path d="M1.6 12.5L52 5" stroke="#3a3a3f" stroke-width="1.2"/>
<path d="M50 2.9L75.5 2.3L88 2.2L56.2 12.3Z" fill="#d7a18b"/><path d="M52 6L86 2.6" stroke="#e9bfae" stroke-width="1.4"/>
<path d="M75 2.3L88.5 2.1L70 7.9Z" fill="#17171b"/></svg>
<svg style="left:619px;top:594px;" width="45" height="27" viewBox="0 0 45 27"><path d="M1.5 2Q3 14 14 20Q24 25.5 34 19Q40 15 43 8.5L27 11L22.5 4.5L16 11Z" fill="#e9c19c"/>
<path d="M1.5 2L3.5 8L2.5 9.5L6 13L5.7 15L10 17.2L10.5 19.3L15 20.2L16.5 22.3L21 21.8L23.5 24L27.5 22L30.7 23L33 19.8L36.5 19.6L37.5 16L40.5 14.7L40.7 11.3L43.2 8.5" fill="none" stroke="#1b1b1b" stroke-width="1.7" stroke-linejoin="round"/>
<path d="M16 11L13 19M22.5 5L23 23M27 11L32 20M19 9L18 20" stroke="#c99a72" stroke-width=".9"/><path d="M18 10L22.5 4.5L27 11L22.5 13Z" fill="#2f5f82" opacity=".55"/></svg>
<span class="t f" style="left:530.55px;top:341.09px;font-size:12px;color:#484848;font-weight:700;letter-spacing:0.096px;-webkit-text-stroke:0;">Express your feeling about one</span>
<span class="t f" style="left:550.75px;top:355.34px;font-size:12px;color:#484848;font-weight:700;letter-spacing:0.397px;-webkit-text-stroke:0;">country that you love...</span>
<div style="left:527.3px;top:386.8px;width:190px;height:175px;background:#fff;border:1px solid #b9e0f2;"></div>
<div style="left:718.5px;top:388.2px;width:15.2px;height:15.6px;background:#fff;border:1px solid #d5d5d5;"></div>
<span class="t fs" style="left:724.80px;top:393.48px;font-size:6px;color:#8a8a8a;">1</span>
<svg style="left:775px;top:522px;" width="80" height="80" viewBox="0 0 80 80"><g stroke="#a9aaad" stroke-width=".8"><path d="M54 5L50 15M3 24L15 30M63.4 50.5L74.4 55.8M28 65L23.7 75.5"/></g><circle cx="40" cy="40.2" r="22.8" fill="#fff"/><circle cx="40" cy="40.2" r="22" fill="#29a8e0"/></svg>
<span class="t f" style="left:800.95px;top:558.10px;font-size:8.5px;color:#fff;font-weight:700;letter-spacing:-0.062px;-webkit-text-stroke:0;">Submit</span>
<div style="left:843px;top:535.5px;width:15.8px;height:16.5px;border:1px solid #cfcfcf;"></div>
<span class="t fs" style="left:849.50px;top:541.48px;font-size:6px;color:#9a9a9a;">2</span>
<div style="left:905.5px;top:231px;width:15.2px;height:420px;background:#f7f7f7;"></div>
<div style="left:909px;top:247px;width:8.6px;height:382px;background:#c1c1c1;border-radius:4.3px;"></div>
<div style="left:221.5px;top:651px;width:684px;height:14.5px;background:#f7f7f7;"></div>
<div style="left:257px;top:654.3px;width:630px;height:8.6px;background:#c1c1c1;border-radius:4.3px;"></div>
<div style="left:218.5px;top:651px;width:3px;height:14.5px;background:#ebebeb;"></div>
<svg style="left:1187px;top:213.5px;" width="8" height="5" viewBox="0 0 8 5"><path d="M0 0H8L4 5Z" fill="#111"/></svg>
<svg style="left:1204px;top:211px;" width="10" height="10" viewBox="0 0 10 10"><path d="M.7 .7L9.3 9.3M9.3 .7L.7 9.3" stroke="#333" stroke-width="1.1"/></svg>
<svg style="left:73px;top:207px;" width="15" height="17" viewBox="0 0 15 17"><path d="M.6 .6H10L14 4.6V16H.6Z" fill="#fbfbfb" stroke="#a6a6a6" stroke-width="1"/><path d="M10 .6V4.6H14" fill="none" stroke="#a6a6a6"/><path d="M3 8H11.5M3 10.3H11.5M3 12.6H11.5" stroke="#c2c2c2" stroke-width="1"/></svg>
<svg style="left:98.5px;top:206.5px;" width="17" height="17" viewBox="0 0 17 17"><path d="M2 16V1H9.5L12.5 4V8" fill="#fbb34a" stroke="#f09a26" stroke-width=".8"/><path d="M9.5 1V4H12.5Z" fill="#fff"/><path d="M.7 16L3.8 8.7H16.3L13.2 16Z" fill="#fdfdfd" stroke="#9a9a9a" stroke-width="1"/></svg>
<svg style="left:126px;top:207px;" width="16" height="17" viewBox="0 0 16 17"><path d="M.6 .6H15.4V13H13.2V16H2.8V13H.6Z" fill="#b9b9b9"/><rect x="2.8" y=".6" width="10.4" height="7" fill="#f3f3f3"/><path d="M4 2.6H12M4 4.6H12" stroke="#c9c9c9"/><rect x="4" y="10.3" width="8" height="5.7" fill="#8f8f8f"/><rect x="5.2" y="11.3" width="2" height="3.6" fill="#ddd"/></svg>
<svg style="left:157px;top:207px;" width="13" height="17" viewBox="0 0 13 17"><path d="M3.5 3.5Q11.5 3 11.2 9.5Q10.8 15 4 15.5" fill="none" stroke="#a5a5a5" stroke-width="1.2"/><path d="M4.6 .5L1 3.7L5 6" fill="none" stroke="#a5a5a5" stroke-width="1.1"/></svg>
<svg style="left:179.5px;top:212.8px;" width="6.5" height="3.6" viewBox="0 0 6.5 3.6"><path d="M0 0H6.5L3.25 3.6Z" fill="#b5b5b5"/></svg>
<svg style="left:198.5px;top:207px;" width="13" height="17" viewBox="0 0 13 17"><path d="M9.5 3.5Q1.5 3 1.8 9.5Q2.2 15 9 15.5" fill="none" stroke="#a5a5a5" stroke-width="1.2"/><path d="M8.4 .5L12 3.7L8 6" fill="none" stroke="#a5a5a5" stroke-width="1.1"/></svg>
<svg style="left:221.5px;top:212.8px;" width="6.5" height="3.6" viewBox="0 0 6.5 3.6"><path d="M0 0H6.5L3.25 3.6Z" fill="#b5b5b5"/></svg>
<svg style="left:246px;top:209px;" width="15" height="16" viewBox="0 0 15 16"><path d="M.6 .6H10.5L14 4V15.4H.6Z" fill="#fff" stroke="#9a9a9a" stroke-width="1"/><path d="M10.2 11V7.8a2.7 2.7 0 1 0-2.7 2.7h1" fill="none" stroke="#ee5a3a" stroke-width="1.5" stroke-linecap="round"/></svg>
<span class="t f" style="left:266.25px;top:210.30px;font-size:15px;color:#1e1e1e;letter-spacing:0.128px;">Around The World - Around The World.approj</span>
<svg style="left:595.5px;top:211.5px;" width="10" height="10" viewBox="0 0 10 10"><path d="M.7 .7L9.3 9.3M9.3 .7L.7 9.3" stroke="#444" stroke-width="1.1"/></svg>
<div style="left:920.7px;top:231px;width:3.6px;height:562px;background:#ebebeb;"></div>
<div style="left:924px;top:231px;width:1px;height:562px;background:#cfcfcf;"></div>
<div style="left:925px;top:231px;width:293px;height:562px;background:#ececec;"></div>
<div style="left:928px;top:232px;width:290px;height:21px;background:#dcdcdc;"></div>
<span class="t fs" style="left:932.00px;top:236.22px;font-size:12.4px;color:#1c1c1c;letter-spacing:-0.040px;-webkit-text-stroke:.4px #1c1c1c;">PROPERTIES - SLIDE</span>
<svg style="left:1179.5px;top:239px;" width="11" height="8" viewBox="0 0 11 8"><path d="M0 4H4" stroke="#111" stroke-width="1"/><path d="M4 1.2V6.8M4.5 2H9.5V5.6H4.5Z" stroke="#111" fill="#111" stroke-width="1"/><path d="M9.8 .8V7.2" stroke="#111" stroke-width="1.2"/></svg>
<svg style="left:1200px;top:238.5px;" width="10" height="10" viewBox="0 0 10 10"><path d="M.6 .6L9.4 9.4M9.4 .6L.6 9.4" stroke="#333" stroke-width="1"/></svg>
<svg style="left:945px;top:276.5px;" width="21.5" height="21" viewBox="0 0 21.5 21"><rect x=".5" y=".5" width="20.5" height="19.7" rx="1" fill="#fff" stroke="#c6c6c6"/><path d="M5 4.5H17.5M5 8.3H17.5M5 12.1H17.5M5 15.9H17.5" stroke="#aacde8" stroke-width="1.3"/><path d="M2.8 4.5H3.8M2.8 8.3H3.8M2.8 12.1H3.8M2.8 15.9H3.8" stroke="#c9c9c9" stroke-width="1.3"/></svg>
<svg style="left:997px;top:274.5px;" width="26" height="26" viewBox="0 0 26 26"><path d="M5.5 1.5V3.5M5.5 2.5H25M25 1.5V3.5M1.5 6V24.5M.5 6H2.5M.5 24.5H2.5" stroke="#9a9a9a" stroke-width=".9" fill="none"/>
<rect x="5.5" y="6" width="19.5" height="18.5" fill="#3bb54a"/>
<g stroke="#fff" stroke-width="1.3" fill="#fff"><path d="M15.2 9.5V21M9.5 15.2H21" /><path d="M15.2 8L13.2 10.8H17.2ZM15.2 22.5L13.2 19.7H17.2ZM8 15.2L10.8 13.2V17.2ZM22.5 15.2L19.7 13.2V17.2Z" stroke="none"/></g></svg>
<svg style="left:1050px;top:274px;" width="26" height="26" viewBox="0 0 26 26"><rect x="3" y="3" width="19.5" height="19.5" fill="#fafafa" stroke="#c9c9c9"/><polygon points="12.80,6.70 14.36,10.86 18.79,11.05 15.32,13.82 16.50,18.10 12.80,15.65 9.10,18.10 10.28,13.82 6.81,11.05 11.24,10.86" fill="#f8a535"/><rect x="0.6" y="0.6" width="4.2" height="4.2" rx="1.2" fill="#fff" stroke="#9d9d9d" stroke-width=".8"/><rect x="0.6" y="20.4" width="4.2" height="4.2" rx="1.2" fill="#fff" stroke="#9d9d9d" stroke-width=".8"/><rect x="20.4" y="0.6" width="4.2" height="4.2" rx="1.2" fill="#fff" stroke="#9d9d9d" stroke-width=".8"/><rect x="20.4" y="20.4" width="4.2" height="4.2" rx="1.2" fill="#fff" stroke="#9d9d9d" stroke-width=".8"/></svg>
<div style="left:928px;top:305px;width:290px;height:1px;background:#cfcfcf;"></div>
<svg style="left:1002.5px;top:299.8px;" width="13" height="6.5" viewBox="0 0 13 6.5"><path d="M0 6.2L6.5 .3L13 6.2" fill="#ececec" stroke="#cfcfcf" stroke-width="1"/></svg>
<svg style="left:936px;top:317px;" width="10.5" height="5.5" viewBox="0 0 10.5 5.5"><path d="M0 0H10.5L5.25 5.5Z" fill="#0b6db8"/></svg>
<span class="t fs" style="left:953.25px;top:312.11px;font-size:14.5px;color:#0b6db8;letter-spacing:0.024px;-webkit-text-stroke:.4px #0b6db8;">Container Layout</span>
<svg style="left:936px;top:457.3px;" width="10.5" height="5.5" viewBox="0 0 10.5 5.5"><path d="M0 0H10.5L5.25 5.5Z" fill="#0b6db8"/></svg>
<span class="t fs" style="left:953.25px;top:452.11px;font-size:14.5px;color:#0b6db8;-webkit-text-stroke:.4px #0b6db8;">Show In Mode</span>
<div style="left:953.75px;top:345.5px;width:15px;height:15px;background:#1a7cf3;border-radius:50%;background:linear-gradient(#3b93fb,#0d6ff0);"></div>
<div style="left:958.4px;top:350.1px;width:5.8px;height:5.8px;background:#fff;border-radius:50%;"></div>
<div style="left:953.75px;top:376.75px;width:15px;height:15px;background:#fff;border-radius:50%;border:.8px solid #d0d0d0;box-shadow:0 .5px 1px rgba(0,0,0,.18);"></div>
<div style="left:953.75px;top:408.0px;width:15px;height:15px;background:#fff;border-radius:50%;border:.8px solid #d0d0d0;box-shadow:0 .5px 1px rgba(0,0,0,.18);"></div>
<span class="t f" style="left:976.25px;top:346.05px;font-size:15px;color:#262626;letter-spacing:-0.453px;">None</span>
<span class="t f" style="left:976.25px;top:377.30px;font-size:15px;color:#262626;letter-spacing:-0.615px;">Flex</span>
<span class="t f" style="left:976.25px;top:408.55px;font-size:15px;color:#262626;letter-spacing:-0.281px;">Grid</span>
<div style="left:954px;top:486.45px;width:14.6px;height:14.6px;border-radius:3.5px;background:linear-gradient(#3b93fb,#0d6ff0);"></div>
<svg style="left:954px;top:486.45px;" width="14.6" height="14.6" viewBox="0 0 14.6 14.6"><path d="M3.6 7.6L6.3 10.5L11 3.9" fill="none" stroke="#fff" stroke-width="1.8" stroke-linecap="round" stroke-linejoin="round"/></svg>
<span class="t f" style="left:976.25px;top:486.80px;font-size:15px;color:#262626;letter-spacing:0.059px;">Demonstration</span>
<div style="left:954px;top:517.7px;width:14.6px;height:14.6px;border-radius:3.5px;background:linear-gradient(#3b93fb,#0d6ff0);"></div>
<svg style="left:954px;top:517.7px;" width="14.6" height="14.6" viewBox="0 0 14.6 14.6"><path d="M3.6 7.6L6.3 10.5L11 3.9" fill="none" stroke="#fff" stroke-width="1.8" stroke-linecap="round" stroke-linejoin="round"/></svg>
<span class="t f" style="left:976.25px;top:518.05px;font-size:15px;color:#262626;">Tutorial</span>
<div style="left:954px;top:548.95px;width:14.6px;height:14.6px;border-radius:3.5px;background:linear-gradient(#3b93fb,#0d6ff0);"></div>
<svg style="left:954px;top:548.95px;" width="14.6" height="14.6" viewBox="0 0 14.6 14.6"><path d="M3.6 7.6L6.3 10.5L11 3.9" fill="none" stroke="#fff" stroke-width="1.8" stroke-linecap="round" stroke-linejoin="round"/></svg>
<span class="t f" style="left:976.25px;top:549.30px;font-size:15px;color:#262626;letter-spacing:0.045px;">Practice</span>
<div style="left:954px;top:580.2px;width:14.6px;height:14.6px;border-radius:3.5px;background:linear-gradient(#3b93fb,#0d6ff0);"></div>
<svg style="left:954px;top:580.2px;" width="14.6" height="14.6" viewBox="0 0 14.6 14.6"><path d="M3.6 7.6L6.3 10.5L11 3.9" fill="none" stroke="#fff" stroke-width="1.8" stroke-linecap="round" stroke-linejoin="round"/></svg>
<span class="t f" style="left:976.25px;top:580.55px;font-size:15px;color:#262626;letter-spacing:-0.005px;">Test</span>
<div style="left:62px;top:665.5px;width:859px;height:8px;background:#e4e4e4;"></div>
<div style="left:62px;top:672.7px;width:859px;height:1px;background:#c9c9c9;"></div>
<div style="left:62px;top:673.7px;width:858.7px;height:34.5px;background:#d7d7d7;"></div>
<span class="t fs" style="left:66.25px;top:683.68px;font-size:12.2px;color:#1c1c1c;letter-spacing:-0.007px;-webkit-text-stroke:.35px #1c1c1c;">TIMELINE</span>
<div style="left:62px;top:708px;width:858.7px;height:85px;background:#ececec;"></div>
<div style="left:62px;top:736px;width:843.5px;height:1px;background:#dadada;"></div>
<div style="left:62px;top:763.7px;width:843.5px;height:1px;background:#dadada;"></div>
<div style="left:62px;top:788px;width:843.5px;height:1px;background:#dadada;"></div>
<div style="left:284.6px;top:708px;width:1.2px;height:85px;background:#f6f6f6;"></div>
<div style="left:286px;top:708px;width:1px;height:85px;background:#dedede;"></div>
<span class="t f" style="left:85.50px;top:714.26px;font-size:16px;color:#262626;letter-spacing:-0.038px;">Main Timeline</span>
<span class="t f" style="left:85.50px;top:745.26px;font-size:16px;color:#262626;letter-spacing:-0.270px;">Slide</span>
<span class="t f" style="left:85.50px;top:769.46px;font-size:16px;color:#262626;letter-spacing:0.134px;">Button_2</span>
<svg style="left:200px;top:719.3px;" width="11" height="6.5" viewBox="0 0 11 6.5"><path d="M0 0H11L5.5 6.5Z" fill="#a3a3a3"/></svg>
<div style="left:219px;top:713.7px;width:1px;height:15px;background:#d0d0d0;"></div>
<svg style="left:238px;top:718px;" width="16" height="10" viewBox="0 0 16 10"><path d="M.3 5Q8-3.5 15.7 5Q8 13.5 .3 5Z" fill="#8a8a8a"/><circle cx="8" cy="5" r="3.1" fill="#ececec"/><circle cx="8" cy="5" r="1.7" fill="#8a8a8a"/><path d="M8 3.2V5H9.6" stroke="#ececec" stroke-width=".7" fill="none"/></svg>
<svg style="left:238px;top:771.5px;" width="16" height="10" viewBox="0 0 16 10"><path d="M.3 5Q8-3.5 15.7 5Q8 13.5 .3 5Z" fill="#8a8a8a"/><circle cx="8" cy="5" r="3.1" fill="#ececec"/><circle cx="8" cy="5" r="1.7" fill="#8a8a8a"/><path d="M8 3.2V5H9.6" stroke="#ececec" stroke-width=".7" fill="none"/></svg>
<svg style="left:266.5px;top:715px;" width="13" height="13" viewBox="0 0 13 13"><path d="M8 5V3.3Q8 .8 10.3 .8Q12.5 .8 12.5 3.3V5" fill="none" stroke="#c4c4c4" stroke-width="1.1"/><path d="M2.6 5.5V3.6Q2.6 1 5.2 1Q7.8 1 7.8 3.6V5.5" fill="none" stroke="#8a8a8a" stroke-width="1.3"/><rect x=".8" y="5.3" width="8.8" height="7" rx=".8" fill="#8a8a8a"/><rect x="4.5" y="7.3" width="1.4" height="3" fill="#ececec"/><rect x="9.6" y="6.5" width="2.7" height="5.8" fill="#c4c4c4"/></svg>
<svg style="left:266.5px;top:768px;" width="13" height="13" viewBox="0 0 13 13"><path d="M6 6V3.4Q6 .8 8.6 .8Q11.2 .8 11.2 3.4V4.5" fill="none" stroke="#9a9a9a" stroke-width="1.1"/><rect x=".8" y="5.5" width="8.8" height="7" rx=".8" fill="#8a8a8a"/><rect x="4.5" y="7.5" width="1.4" height="3" fill="#ececec"/></svg>
<svg style="left:286px;top:708px;" width="634.7" height="28.5" viewBox="0 0 634.7 28.5"><path d="M5.75 28V14.5M11.32 28V23M16.90 28V23M22.48 28V23M28.05 28V23M33.62 28V18M39.20 28V23M44.77 28V23M50.35 28V23M55.93 28V23M61.50 28V14.5M67.07 28V23M72.65 28V23M78.23 28V23M83.80 28V23M89.38 28V18M94.95 28V23M100.52 28V23M106.10 28V23M111.68 28V23M117.25 28V14.5M122.82 28V23M128.40 28V23M133.98 28V23M139.55 28V23M145.12 28V18M150.70 28V23M156.27 28V23M161.85 28V23M167.43 28V23M173.00 28V14.5M178.57 28V23M184.15 28V23M189.73 28V23M195.30 28V23M200.88 28V18M206.45 28V23M212.02 28V23M217.60 28V23M223.18 28V23M228.75 28V14.5M234.33 28V23M239.90 28V23M245.48 28V23M251.05 28V23M256.62 28V18M262.20 28V23M267.77 28V23M273.35 28V23M278.92 28V23M284.50 28V14.5M290.08 28V23M295.65 28V23M301.23 28V23M306.80 28V23M312.38 28V18M317.95 28V23M323.52 28V23M329.10 28V23M334.67 28V23M340.25 28V14.5M345.83 28V23M351.40 28V23M356.98 28V23M362.55 28V23M368.12 28V18M373.70 28V23M379.27 28V23M384.85 28V23M390.42 28V23M396.00 28V14.5M401.58 28V23M407.15 28V23M412.73 28V23M418.30 28V23M423.88 28V18M429.45 28V23M435.02 28V23M440.60 28V23M446.17 28V23M451.75 28V14.5M457.33 28V23M462.90 28V23M468.48 28V23M474.05 28V23M479.62 28V18M485.20 28V23M490.77 28V23M496.35 28V23M501.92 28V23M507.50 28V14.5M513.08 28V23M518.65 28V23M524.23 28V23M529.80 28V23M535.38 28V18M540.95 28V23M546.52 28V23M552.10 28V23M557.67 28V23M563.25 28V14.5M568.83 28V23M574.40 28V23M579.98 28V23M585.55 28V23M591.12 28V18M596.70 28V23M602.27 28V23M607.85 28V23M613.42 28V23M619.00 28V14.5M624.58 28V23M630.15 28V23" stroke="#b9b9b9" stroke-width="1" fill="none"/></svg>
<span class="t fs" style="left:290.75px;top:709.03px;font-size:12.5px;color:#1c1c1c;letter-spacing:-0.078px;">0:00</span>
<span class="t fs" style="left:335.70px;top:709.03px;font-size:12.5px;color:#1c1c1c;letter-spacing:-0.078px;">0:01</span>
<span class="t fs" style="left:391.45px;top:709.03px;font-size:12.5px;color:#1c1c1c;letter-spacing:-0.078px;">0:02</span>
<span class="t fs" style="left:447.20px;top:709.03px;font-size:12.5px;color:#1c1c1c;letter-spacing:-0.078px;">0:03</span>
<span class="t fs" style="left:502.95px;top:709.03px;font-size:12.5px;color:#1c1c1c;letter-spacing:-0.078px;">0:04</span>
<span class="t fs" style="left:558.70px;top:709.03px;font-size:12.5px;color:#1c1c1c;letter-spacing:-0.078px;">0:05</span>
<span class="t fs" style="left:614.45px;top:709.03px;font-size:12.5px;color:#1c1c1c;letter-spacing:-0.078px;">0:06</span>
<span class="t fs" style="left:670.20px;top:709.03px;font-size:12.5px;color:#1c1c1c;letter-spacing:-0.078px;">0:07</span>
<span class="t fs" style="left:725.95px;top:709.03px;font-size:12.5px;color:#1c1c1c;letter-spacing:-0.078px;">0:08</span>
<span class="t fs" style="left:781.70px;top:709.03px;font-size:12.5px;color:#1c1c1c;letter-spacing:-0.078px;">0:09</span>
<span class="t fs" style="left:837.45px;top:709.03px;font-size:12.5px;color:#1c1c1c;letter-spacing:-0.078px;">0:10</span>
<span class="t fs" style="left:897.00px;top:709.03px;font-size:12.5px;color:#1c1c1c;letter-spacing:-0.422px;">0:11</span>
<div style="left:291.5px;top:739.3px;width:168.2px;height:24.7px;background:#e7e9fd;border:1px solid #b4b4b4;"></div>
<div style="left:291.5px;top:763.3px;width:168.2px;height:25px;background:#e7e9fd;border:1px solid #b4b4b4;"></div>
<div style="left:291.5px;top:787.6px;width:168.2px;height:6px;background:#e7e9fd;border:1px solid #b4b4b4;"></div>
<div style="left:452px;top:742px;width:3.2px;height:18.5px;background:#fbe3a4;border:1px solid #f3a126;"></div>
<div style="left:452px;top:790px;width:3.2px;height:4px;background:#f3a126;"></div>
<div style="left:458px;top:737px;width:2px;height:24px;background:#ec4652;"></div>
<div style="left:905.5px;top:736.5px;width:15.2px;height:56.5px;background:#f8f8f8;"></div>
<div style="left:908.7px;top:740.4px;width:8.8px;height:22.6px;background:#bdbdbd;border-radius:4.4px;"></div>
<svg style="left:290px;top:683px;" width="16.5" height="16.5" viewBox="0 0 16.5 16.5"><rect x="5" y="5" width="11" height="11" fill="#c6c6c6"/><rect x="0" y="0" width="11.5" height="11.5" fill="#0d70bd"/></svg>
<div style="left:316.25px;top:681px;width:1px;height:20px;background:#c2c2c2;"></div>
<div style="left:395.0px;top:681px;width:1px;height:20px;background:#c2c2c2;"></div>
<div style="left:447.75px;top:681px;width:1px;height:20px;background:#c2c2c2;"></div>
<div style="left:538.25px;top:681px;width:1px;height:20px;background:#c2c2c2;"></div>
<div style="left:681.9px;top:681px;width:1px;height:20px;background:#c2c2c2;"></div>
<svg style="left:331.5px;top:684.3px;" width="11.5" height="13.5" viewBox="0 0 11.5 13.5"><path d="M0 0L11.5 6.75L0 13.5Z" fill="#3bb54a"/></svg>
<svg style="left:353px;top:688.5px;" width="6.5" height="3.8" viewBox="0 0 6.5 3.8"><path d="M0 0H6.5L3.25 3.8Z" fill="#111"/></svg>
<div style="left:371.25px;top:685px;width:12px;height:12px;background:#0d70bd;"></div>
<svg style="left:409.5px;top:683.2px;" width="14.6" height="14.6" viewBox="0 0 14.6 14.6"><circle cx="7.3" cy="7.3" r="7.1" fill="#e0131e"/><rect x="6.1" y="2.6" width="2.4" height="6.2" rx="1" fill="#fff"/><circle cx="7.3" cy="11" r="1.4" fill="#fff"/></svg>
<svg style="left:432px;top:688.5px;" width="6.5" height="3.8" viewBox="0 0 6.5 3.8"><path d="M0 0H6.5L3.25 3.8Z" fill="#111"/></svg>
<svg style="left:458.5px;top:683.5px;" width="16.5" height="16" viewBox="0 0 16.5 16"><path d="M9.2 9.2L15.2 14.8" stroke="#8a8a8a" stroke-width="2.2" stroke-linecap="round"/><circle cx="5.6" cy="5.6" r="4.7" fill="#fdfdfd" stroke="#9a9a9a" stroke-width="1"/><circle cx="5.6" cy="5.6" r="2" fill="none" stroke="#18a7b5" stroke-width="1.2" stroke-dasharray="2.4 1"/></svg>
<svg style="left:485.3px;top:683.5px;" width="16.5" height="16" viewBox="0 0 16.5 16"><path d="M9.2 9.2L15.2 14.8" stroke="#8a8a8a" stroke-width="2.2" stroke-linecap="round"/><circle cx="5.6" cy="5.6" r="4.7" fill="#fdfdfd" stroke="#9a9a9a" stroke-width="1"/><path d="M3 5.6H8.2" stroke="#18a7b5" stroke-width="1.4"/></svg>
<svg style="left:512px;top:683.5px;" width="16.5" height="16" viewBox="0 0 16.5 16"><path d="M9.2 9.2L15.2 14.8" stroke="#8a8a8a" stroke-width="2.2" stroke-linecap="round"/><circle cx="5.6" cy="5.6" r="4.7" fill="#fdfdfd" stroke="#9a9a9a" stroke-width="1"/><path d="M3 5.6H8.2M5.6 3V8.2" stroke="#18a7b5" stroke-width="1.4"/></svg>
<svg style="left:549.5px;top:683px;" width="15.5" height="16" viewBox="0 0 15.5 16"><rect x="0" y="0" width="4" height="6.5" fill="#c3c3c3"/><rect x="5" y="0" width="1.5" height="6.5" fill="#9b9b9b"/><rect x="12.5" y="0" width="2.5" height="6.5" fill="#9b9b9b"/><path d="M9.5 0V5" stroke="#9b9b9b" stroke-width="1"/><path d="M7.8 3.5L9.5 6.3L11.2 3.5Z" fill="#9b9b9b"/><rect x="6" y="9.3" width="7" height="6.5" fill="#9b9b9b"/></svg>
<svg style="left:576px;top:683px;" width="15.5" height="16" viewBox="0 0 15.5 16"><rect x="0" y="0" width="7.5" height="6.5" fill="#c3c3c3"/><rect x="12.5" y="0" width="2.5" height="6.5" fill="#9b9b9b"/><path d="M9.8 0V5" stroke="#9b9b9b" stroke-width="1"/><path d="M8.1 3.5L9.8 6.3L11.5 3.5Z" fill="#9b9b9b"/><rect x="6" y="9.3" width="7" height="6.5" fill="#9b9b9b"/></svg>
<svg style="left:602.7px;top:683px;" width="15.5" height="16" viewBox="0 0 15.5 16"><rect x="0" y="0" width="6.5" height="6.5" fill="#9b9b9b"/><path d="M6.5 7V15" stroke="#9b9b9b" stroke-width=".9" stroke-dasharray="1.4 1.2"/><rect x="8.3" y="7.5" width="6.2" height="8" fill="#e9e9e9" stroke="#c3c3c3" stroke-width=".8"/></svg>
<svg style="left:629.5px;top:683px;" width="16" height="16" viewBox="0 0 16 16"><rect x="4.2" y="4.2" width="7.8" height="7.8" fill="#9b9b9b"/><path d="M2.3 0V13.7H16M0 2.3H13.7V16" fill="none" stroke="#9b9b9b" stroke-width="1"/></svg>
<svg style="left:656.4px;top:683px;" width="16" height="16" viewBox="0 0 16 16"><rect x="4" y="0" width="7" height="6.5" fill="#9b9b9b"/><rect x="0" y="9" width="4" height="7" fill="#c3c3c3"/><rect x="10" y="9" width="6" height="7" fill="#c3c3c3"/><path d="M2 7V10M7 7.5V14" stroke="#9b9b9b" stroke-width="1"/><path d="M5.3 12L7 15L8.7 12Z" fill="#9b9b9b"/></svg>
<svg style="left:693px;top:683.5px;" width="16.5" height="15" viewBox="0 0 16.5 15"><path d="M0 1H5M0 4.2H5M0 7.5H5M0 10.8H5M0 14H5M11.5 1H16.5M11.5 4.2H16.5M11.5 7.5H16.5M11.5 10.8H16.5M11.5 14H16.5" stroke="#9b9b9b" stroke-width="1" stroke-dasharray="5 0"/><rect x=".5" y="1" width="4" height="13" fill="none" stroke="#9b9b9b" stroke-width=".8"/><rect x="12" y="1" width="4" height="13" fill="none" stroke="#9b9b9b" stroke-width=".8"/><path d="M8.25 0V15" stroke="#9b9b9b" stroke-width=".9" stroke-dasharray="1.5 1.2"/><path d="M6.7 3L8.25 .3L9.8 3ZM6.7 12L8.25 14.7L9.8 12Z" fill="#9b9b9b"/></svg>
<svg style="left:719.6px;top:683.5px;" width="16.5" height="15" viewBox="0 0 16.5 15"><path d="M0 1H5M0 4.2H5M0 7.5H5M0 10.8H5M0 14H5M11.5 1H16.5M11.5 4.2H16.5M11.5 7.5H16.5M11.5 10.8H16.5M11.5 14H16.5" stroke="#9b9b9b" stroke-width="1" stroke-dasharray="5 0"/><rect x=".5" y="1" width="4" height="13" fill="none" stroke="#9b9b9b" stroke-width=".8"/><rect x="12" y="1" width="4" height="13" fill="none" stroke="#9b9b9b" stroke-width=".8"/><path d="M5.5 7.5H11" stroke="#9b9b9b" stroke-width="1"/><path d="M7.5 5.7L10.5 7.5L7.5 9.3Z" fill="#9b9b9b"/></svg>
<svg style="left:746.5px;top:682.5px;" width="16.5" height="17" viewBox="0 0 16.5 17"><circle cx="12.3" cy="2.2" r="2" fill="#8a8a8a"/><path d="M5.5 5.2L10 4L12.2 7.2L15 8M10 4.5L8 9.2L11 11.2L9.5 16M8 9.2L5.5 12.5L2 12.5" fill="none" stroke="#8a8a8a" stroke-width="1.9" stroke-linecap="round" stroke-linejoin="round"/><path d="M0 7.5H3.5M0 10H2.5M0 15H6" stroke="#8a8a8a" stroke-width="1"/></svg>
<svg style="left:776px;top:683px;" width="11.5" height="16" viewBox="0 0 11.5 16"><path d="M5.75 .3Q11.3 7.5 11.3 10.5A5.55 5.55 0 0 1 .2 10.5Q.2 7.5 5.75 .3Z" fill="#bdbdbd"/></svg>
<svg style="left:802.3px;top:683px;" width="16.5" height="15.5" viewBox="0 0 16.5 15.5"><path d="M0 5H3.3L8.3 .8V14.7L3.3 10.5H0Z" fill="#a6a6a6"/><path d="M10.3 5Q12.3 7.75 10.3 10.5M12 2.7Q16 7.75 12 12.8" fill="none" stroke="#a6a6a6" stroke-width="1.3"/></svg>
<svg style="left:826.4px;top:689px;" width="6.5" height="3.8" viewBox="0 0 6.5 3.8"><path d="M0 0H6.5L3.25 3.8Z" fill="#bdbdbd"/></svg>
<svg style="left:842.3px;top:683.3px;" width="16.7" height="15.3" viewBox="0 0 16.7 15.3"><rect x=".5" y=".5" width="15.7" height="14.3" fill="#fafafa" stroke="#8f8f8f"/><path d="M2.3 13H14.2V3Z" fill="#7d7d7d"/></svg>
<svg style="left:868.9px;top:683.3px;" width="16.7" height="15.3" viewBox="0 0 16.7 15.3"><rect x=".5" y=".5" width="15.7" height="14.3" fill="#fafafa" stroke="#8f8f8f"/><path d="M2.3 3V13H14.2Z" fill="#7d7d7d"/></svg>
<svg style="left:910px;top:689px;" width="6.5" height="3.8" viewBox="0 0 6.5 3.8"><path d="M0 0H6.5L3.25 3.8Z" fill="#111"/></svg>
<svg style="left:813.5px;top:797.5px;" width="17" height="17" viewBox="0 0 17 17"><text x="0" y="8" font-family="Liberation Sans" font-size="8.5" fill="#5d7e9c">abc</text><path d="M5 11L8.5 14.5L16 7" fill="none" stroke="#5d7e9c" stroke-width="1.4"/></svg>
<svg style="left:945px;top:799px;" width="13.5" height="13.5" viewBox="0 0 13.5 13.5"><rect x=".6" y=".8" width="12.3" height="7.5" fill="none" stroke="#fff" stroke-width="1"/><path d="M2.5 3H11M6.75 8.3V12M3.5 12.5H10" stroke="#fff" stroke-width="1"/></svg>
<svg style="left:965px;top:803.3px;" width="8.5" height="5" viewBox="0 0 8.5 5"><path d="M0 0H8.5L4.25 5Z" fill="#fff"/></svg>
<div style="left:985.8px;top:804px;width:10.7px;height:2.3px;background:#fff;"></div>
<div style="left:1001.5px;top:804.7px;width:119.3px;height:1px;background:#fff;"></div>
<div style="left:1011.6px;top:798.5px;width:5px;height:14.2px;background:#fff;"></div>
<div style="left:1060.8px;top:802.5px;width:1px;height:5.5px;background:#fff;"></div>
<div style="left:1126.8px;top:804px;width:10.4px;height:2.3px;background:#fff;"></div>
<div style="left:1130.85px;top:800px;width:2.3px;height:10.4px;background:#fff;"></div>
<svg style="left:1198px;top:799.3px;" width="13" height="13" viewBox="0 0 13 13"><rect x=".5" y=".5" width="12" height="12" fill="none" stroke="#fff" stroke-width=".9"/><circle cx="6.5" cy="6.5" r="1.6" fill="#fff"/><path d="M2.3 4V2.3H4M9 2.3H10.7V4M10.7 9V10.7H9M4 10.7H2.3V9" fill="none" stroke="#fff" stroke-width=".8"/></svg>
</div>
</body></html>
